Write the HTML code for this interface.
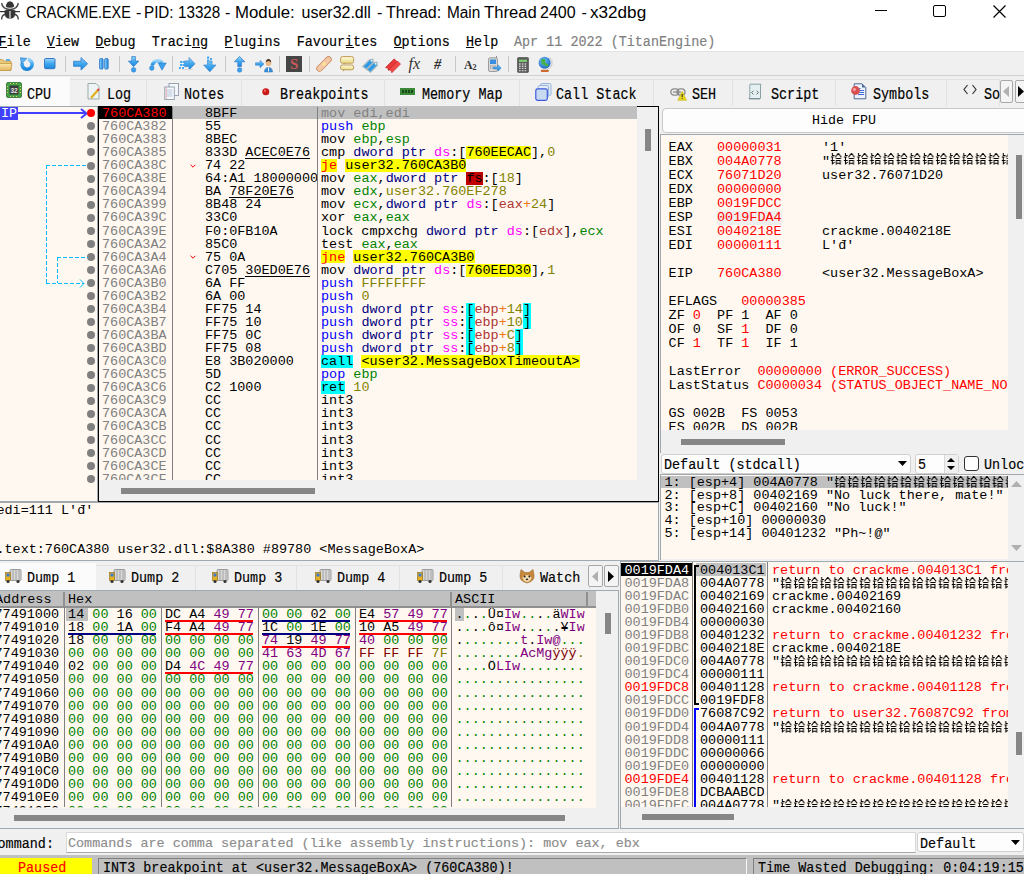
<!DOCTYPE html><html><head><meta charset="utf-8"><style>
html,body{margin:0;padding:0;width:1024px;height:874px;overflow:hidden;background:#f0f0f0;position:relative}
body div{position:absolute;box-sizing:border-box}
.t{white-space:pre;font-family:'Liberation Mono',monospace}
svg{position:absolute;overflow:visible}
</style></head><body>
<div style="left:0px;top:0px;width:1024px;height:51px;background:#ffffff;"></div>
<svg style="left:0;top:0" width="22" height="22" viewBox="0 0 22 22">
<path d="M1.6 3.2 Q2.5 9.5 9.95 9.5 Q17.4 9.5 18.3 3.2" stroke="#4a4a4a" stroke-width="1.5" fill="none"/>
<path d="M0 11.6 H19.9" stroke="#333" stroke-width="1.2"/>
<path d="M5 14.5 Q1.8 15 1.6 19.5 M14.9 14.5 Q18.1 15 18.3 19.5" stroke="#444" stroke-width="1.4" fill="none"/>
<path d="M9.95 1.2 Q13.2 1.4 14.2 6.2 Q13.5 7.8 9.95 7.8 Q6.4 7.8 5.7 6.2 Q6.7 1.4 9.95 1.2z" fill="#353535"/>
<path d="M4.6 10.2 Q9.95 9.2 15.3 10.2 Q16.2 18.8 9.95 18.8 Q3.7 18.8 4.6 10.2z" fill="#353535"/>
<rect x="9" y="11" width="1.9" height="7.6" fill="#a8a8a8"/>
</svg>
<div class="t" style="left:25.5px;top:3px;color:#000;font-size:16px;font-family:'Liberation Sans', sans-serif;line-height:19px;transform:scaleX(0.9);transform-origin:0 0">CRACKME.EXE</div>
<div class="t" style="left:136px;top:3px;color:#000;font-size:16px;font-family:'Liberation Sans', sans-serif;line-height:19px;transform:scaleX(1);transform-origin:0 0">-</div>
<div class="t" style="left:144px;top:3px;color:#000;font-size:16px;font-family:'Liberation Sans', sans-serif;line-height:19px;transform:scaleX(0.95);transform-origin:0 0">PID:</div>
<div class="t" style="left:177.5px;top:3px;color:#000;font-size:16px;font-family:'Liberation Sans', sans-serif;line-height:19px;transform:scaleX(0.95);transform-origin:0 0">13328</div>
<div class="t" style="left:225px;top:3px;color:#000;font-size:16px;font-family:'Liberation Sans', sans-serif;line-height:19px;transform:scaleX(1);transform-origin:0 0">-</div>
<div class="t" style="left:235px;top:3px;color:#000;font-size:16px;font-family:'Liberation Sans', sans-serif;line-height:19px;transform:scaleX(1.05);transform-origin:0 0">Module:</div>
<div class="t" style="left:301.5px;top:3px;color:#000;font-size:16px;font-family:'Liberation Sans', sans-serif;line-height:19px;transform:scaleX(1.0);transform-origin:0 0">user32.dll</div>
<div class="t" style="left:377px;top:3px;color:#000;font-size:16px;font-family:'Liberation Sans', sans-serif;line-height:19px;transform:scaleX(1);transform-origin:0 0">-</div>
<div class="t" style="left:386px;top:3px;color:#000;font-size:16px;font-family:'Liberation Sans', sans-serif;line-height:19px;transform:scaleX(1.0);transform-origin:0 0">Thread:</div>
<div class="t" style="left:447px;top:3px;color:#000;font-size:16px;font-family:'Liberation Sans', sans-serif;line-height:19px;transform:scaleX(0.96);transform-origin:0 0">Main</div>
<div class="t" style="left:483.5px;top:3px;color:#000;font-size:16px;font-family:'Liberation Sans', sans-serif;line-height:19px;transform:scaleX(1.04);transform-origin:0 0">Thread</div>
<div class="t" style="left:540px;top:3px;color:#000;font-size:16px;font-family:'Liberation Sans', sans-serif;line-height:19px;transform:scaleX(1.0);transform-origin:0 0">2400</div>
<div class="t" style="left:581.5px;top:3px;color:#000;font-size:16px;font-family:'Liberation Sans', sans-serif;line-height:19px;transform:scaleX(1);transform-origin:0 0">-</div>
<div class="t" style="left:590px;top:3px;color:#000;font-size:16px;font-family:'Liberation Sans', sans-serif;line-height:19px;transform:scaleX(1.07);transform-origin:0 0">x32dbg</div>
<div style="left:875px;top:10px;width:12px;height:1px;background:#000;"></div>
<div style="left:933px;top:5px;width:13px;height:12px;border:1.2px solid #000;border-radius:2px"></div>
<svg style="left:993px;top:5px" width="13" height="13"><path d="M0.5 0.5 L12.5 12.5 M12.5 0.5 L0.5 12.5" stroke="#000" stroke-width="1.2"/></svg>
<div class="t" style="left:-1.5px;top:34px;color:#000;font-size:13.43px;font-family:'Liberation Mono', monospace;line-height:15px;transform:scaleY(1.11);transform-origin:0 2px;-webkit-text-stroke:0.15px #000;">File</div>
<div style="left:-1.0px;top:47px;width:8px;height:1px;background:#000;"></div>
<div class="t" style="left:46.86px;top:34px;color:#000;font-size:13.43px;font-family:'Liberation Mono', monospace;line-height:15px;transform:scaleY(1.11);transform-origin:0 2px;-webkit-text-stroke:0.15px #000;">View</div>
<div style="left:47.36px;top:47px;width:8px;height:1px;background:#000;"></div>
<div class="t" style="left:95.22px;top:34px;color:#000;font-size:13.43px;font-family:'Liberation Mono', monospace;line-height:15px;transform:scaleY(1.11);transform-origin:0 2px;-webkit-text-stroke:0.15px #000;">Debug</div>
<div style="left:95.72px;top:47px;width:8px;height:1px;background:#000;"></div>
<div class="t" style="left:151.64px;top:34px;color:#000;font-size:13.43px;font-family:'Liberation Mono', monospace;line-height:15px;transform:scaleY(1.11);transform-origin:0 2px;-webkit-text-stroke:0.15px #000;">Tracing</div>
<div style="left:192.44px;top:47px;width:8px;height:1px;background:#000;"></div>
<div class="t" style="left:224.18px;top:34px;color:#000;font-size:13.43px;font-family:'Liberation Mono', monospace;line-height:15px;transform:scaleY(1.11);transform-origin:0 2px;-webkit-text-stroke:0.15px #000;">Plugins</div>
<div style="left:224.68px;top:47px;width:8px;height:1px;background:#000;"></div>
<div class="t" style="left:296.72px;top:34px;color:#000;font-size:13.43px;font-family:'Liberation Mono', monospace;line-height:15px;transform:scaleY(1.11);transform-origin:0 2px;-webkit-text-stroke:0.15px #000;">Favourites</div>
<div style="left:345.58px;top:47px;width:8px;height:1px;background:#000;"></div>
<div class="t" style="left:393.44px;top:34px;color:#000;font-size:13.43px;font-family:'Liberation Mono', monospace;line-height:15px;transform:scaleY(1.11);transform-origin:0 2px;-webkit-text-stroke:0.15px #000;">Options</div>
<div style="left:393.94px;top:47px;width:8px;height:1px;background:#000;"></div>
<div class="t" style="left:465.98px;top:34px;color:#000;font-size:13.43px;font-family:'Liberation Mono', monospace;line-height:15px;transform:scaleY(1.11);transform-origin:0 2px;-webkit-text-stroke:0.15px #000;">Help</div>
<div style="left:466.48px;top:47px;width:8px;height:1px;background:#000;"></div>
<div class="t" style="left:514px;top:34px;color:#808080;font-size:13.43px;font-family:'Liberation Mono', monospace;line-height:15px;transform:scaleY(1.11);transform-origin:0 2px;-webkit-text-stroke:0.15px #808080;">Apr 11 2022 (TitanEngine)</div>
<div style="left:0px;top:51px;width:1024px;height:1px;background:#e3e3e3;"></div>
<div style="left:0px;top:75px;width:1024px;height:1px;background:#d0d0d0;"></div>
<div style="left:65px;top:56px;width:1px;height:16px;background:#c8c8c8;"></div>
<div style="left:119px;top:56px;width:1px;height:16px;background:#c8c8c8;"></div>
<div style="left:172px;top:56px;width:1px;height:16px;background:#c8c8c8;"></div>
<div style="left:225px;top:56px;width:1px;height:16px;background:#c8c8c8;"></div>
<div style="left:279px;top:56px;width:1px;height:16px;background:#c8c8c8;"></div>
<div style="left:309px;top:56px;width:1px;height:16px;background:#c8c8c8;"></div>
<div style="left:455px;top:56px;width:1px;height:16px;background:#c8c8c8;"></div>
<div style="left:508px;top:56px;width:1px;height:16px;background:#c8c8c8;"></div>
<svg style="left:0;top:0" width="0" height="0"><defs><linearGradient id="gb" x1="0" y1="0" x2="0" y2="1"><stop offset="0" stop-color="#9ad6fa"/><stop offset="0.5" stop-color="#3fa6ee"/><stop offset="1" stop-color="#1d86dc"/></linearGradient><linearGradient id="gbh" x1="0" y1="0" x2="1" y2="0"><stop offset="0" stop-color="#8ccff8"/><stop offset="1" stop-color="#1d86dc"/></linearGradient><linearGradient id="gf" x1="0" y1="0" x2="0" y2="1"><stop offset="0" stop-color="#fbe7a8"/><stop offset="1" stop-color="#e2b864"/></linearGradient><linearGradient id="gc" x1="0" y1="0" x2="0" y2="1"><stop offset="0" stop-color="#fffbe0"/><stop offset="1" stop-color="#e8dc80"/></linearGradient><radialGradient id="gg" cx="0.4" cy="0.35" r="0.7"><stop offset="0" stop-color="#7cc8ff"/><stop offset="1" stop-color="#1060c0"/></radialGradient></defs></svg>
<svg style="left:-4px;top:57px" width="17" height="15" viewBox="0 0 17 15"><path d="M0.5 2.5 h6 l1.5 1.5 h7 v9.5 h-14.5z" fill="#e9c778" stroke="#c49a48" stroke-width="0.8"/><path d="M10 2 h4 v2 h-4z" fill="#5ab0e0"/><path d="M0.5 6.5 h15.5 l-1.5 7 h-14z" fill="url(#gf)" stroke="#c49a48" stroke-width="0.8"/></svg>
<svg style="left:19.5px;top:57px" width="15" height="15" viewBox="0 0 15 15"><path d="M7.8 2.3 A5 5 0 1 1 2.4 5.6" fill="none" stroke="url(#gb)" stroke-width="3.6"/><path d="M0.4 0.8 L6.8 1.4 L1.6 6.8z" fill="#5ab4f2" stroke="#2a80d0" stroke-width="0.7"/></svg>
<svg style="left:44px;top:58px" width="12" height="12" viewBox="0 0 12 12"><rect x="0.5" y="0.5" width="10.5" height="10.2" rx="1.2" fill="url(#gb)" stroke="#2a70c0" stroke-width="0.9"/></svg>
<svg style="left:73px;top:57px" width="16" height="14" viewBox="0 0 16 14"><path d="M0.6 4.3 h7.4 v-3.8 l6.6 6.3 l-6.6 6.3 v-3.8 h-7.4z" fill="url(#gb)" stroke="#2a78c8" stroke-width="0.8"/></svg>
<svg style="left:98.5px;top:57.8px" width="10" height="12" viewBox="0 0 10 12"><rect x="0.5" y="0.5" width="3.6" height="10.6" rx="1.2" fill="url(#gbh)" stroke="#2a78c8" stroke-width="0.8"/><rect x="5.6" y="0.5" width="3.6" height="10.6" rx="1.2" fill="url(#gbh)" stroke="#2a78c8" stroke-width="0.8"/></svg>
<svg style="left:127.5px;top:55.5px" width="12" height="17" viewBox="0 0 12 17"><path d="M3.8 0.5 h3.6 v4.6 h3.4 l-5.2 5.6 l-5.2 -5.6 h3.4z" fill="url(#gb)" stroke="#2a78c8" stroke-width="0.7"/><circle cx="5.6" cy="13.9" r="2.3" fill="#3aa0ec" stroke="#2a78c8" stroke-width="0.5"/></svg>
<svg style="left:148.5px;top:56.5px" width="18" height="15" viewBox="0 0 18 15"><path d="M3.2 8.5 A6 6 0 0 1 13.4 5.6" fill="none" stroke="url(#gb)" stroke-width="3.4"/><path d="M9.2 6 h8 l-4.2 7.2z" fill="#3aa0ec" stroke="#2a78c8" stroke-width="0.6"/><circle cx="2.8" cy="11.1" r="2.3" fill="#3aa0ec" stroke="#2a78c8" stroke-width="0.5"/></svg>
<svg style="left:178.5px;top:56.5px" width="17" height="15" viewBox="0 0 17 15"><path d="M5.5 4 h4.5 v-3.5 l6 6.3 l-6 6.3 v-3.5 h-4.5z" fill="url(#gb)" stroke="#2a78c8" stroke-width="0.6"/><path d="M1 4h2v2h-2zM3.5 4h2v2h-2zM1 7h2v2h-2zM3.5 7h2v2h-2zM0 10h2v2h-2zM3 10h2v2h-2z" fill="#4aaaf0"/><path d="M4 12.5 h10" stroke="#d8d8d8" stroke-width="1"/></svg>
<svg style="left:202.5px;top:55.5px" width="14" height="17" viewBox="0 0 14 17"><path d="M4.5 5 h4.5 v4 h4 l-6.2 6.8 l-6.2 -6.8 h4z" fill="url(#gb)" stroke="#2a78c8" stroke-width="0.6"/><path d="M4 0.5h2.2v2.2h-2.2zM7 2h2v2h-2zM4 3.5h2v2h-2zM6.5 5h2v2h-2zM4 7h2v2h-2zM6.5 8h2v2h-2z" fill="#4aaaf0"/></svg>
<svg style="left:233.5px;top:55.5px" width="12" height="17" viewBox="0 0 12 17"><path d="M5.6 0.4 l5.2 5.4 h-3.4 v4.8 h-3.6 v-4.8 h-3.4z" fill="url(#gb)" stroke="#2a78c8" stroke-width="0.7"/><circle cx="5.6" cy="14" r="2.3" fill="#3aa0ec" stroke="#2a78c8" stroke-width="0.5"/></svg>
<svg style="left:255px;top:56.5px" width="18" height="16" viewBox="0 0 18 16"><path d="M0.5 5.8 h4.5 v-2.5 l4 3.7 l-4 3.7 v-2.5 h-4.5z" fill="url(#gb)" stroke="#2a78c8" stroke-width="0.5"/><path d="M9.5 15 q0 -4.5 4 -4.5 q4 0 4 4.5z" fill="#3a90d8" stroke="#2a70b0" stroke-width="0.5"/><circle cx="13.5" cy="6.2" r="2.8" fill="#e8b888"/><path d="M10.8 5.5 q0 -3.5 2.7 -3.5 q2.7 0 2.7 3.5 q-1.2 -1.5 -2.7 -1.5 q-1.5 0 -2.7 1.5z" fill="#4a3020"/><path d="M13.5 10.5 v4" stroke="#f0f0f0" stroke-width="1"/></svg>
<svg style="left:286px;top:56px" width="16" height="16" viewBox="0 0 16 16"><rect x="0" y="0" width="16" height="16" fill="#454545"/><text x="8.2" y="13.2" font-family="Liberation Serif" font-weight="bold" font-size="15" fill="#c85858" text-anchor="middle">S</text></svg>
<svg style="left:316px;top:56px" width="16" height="16" viewBox="0 0 16 16"><path d="M3.5 12.5 L12.5 3.5" stroke="#c88a60" stroke-width="6.4" stroke-linecap="round"/><path d="M3.5 12.5 L12.5 3.5" stroke="#f4c8a4" stroke-width="4.8" stroke-linecap="round"/><rect x="6.3" y="6.3" width="3.4" height="3.4" fill="#fae0a0" transform="rotate(45 8 8)"/></svg>
<svg style="left:339.8px;top:55.8px" width="15" height="16" viewBox="0 0 15 16"><rect x="0.6" y="0.6" width="13" height="6.6" rx="1.8" fill="url(#gc)" stroke="#c09a58" stroke-width="1"/><path d="M3.5 7 l0.5 1.6 l1.6 -1.6" fill="#c09a58"/><rect x="0.6" y="9" width="13" height="4.8" rx="1.8" fill="url(#gc)" stroke="#c09a58" stroke-width="1"/><path d="M3 13.5 l0 2 l2 -2" fill="#c09a58"/></svg>
<svg style="left:361.5px;top:56.5px" width="16" height="16" viewBox="0 0 16 16"><path d="M0.8 9.5 L7.5 2.8 L10.8 2.2 L11.2 5.5 L4.5 12.2z" fill="#2a9ae8" stroke="#a8b8c0" stroke-width="1.3"/><path d="M4.8 12.5 L11.5 5.8 L14.8 5.2 L15.2 8.5 L8.5 15.2z" fill="#2a9ae8" stroke="#a8b8c0" stroke-width="1.3"/><circle cx="9.6" cy="3.8" r="0.9" fill="#fff"/><circle cx="13.6" cy="6.8" r="0.9" fill="#fff"/></svg>
<svg style="left:385px;top:56.5px" width="16" height="16" viewBox="0 0 16 16"><path d="M0.5 10.5 L9.2 1.8 L12.2 4.8 L3.5 13.5 L2.8 11.2z" fill="#e83838" stroke="#c02020" stroke-width="0.6"/><path d="M3.8 12.8 L12.5 4.1 L15.5 7.1 L6.8 15.8 L6.1 13.5z" fill="#f04848" stroke="#c02020" stroke-width="0.6"/></svg>
<svg style="left:407.5px;top:56.5px" width="17" height="16" viewBox="0 0 17 16"><text x="0.5" y="12" font-family="Liberation Serif" font-style="italic" font-size="16" fill="#333">fx</text></svg>
<svg style="left:434px;top:57px" width="14" height="16" viewBox="0 0 14 16"><text x="0" y="11.5" font-family="Liberation Serif" font-weight="bold" font-style="italic" font-size="14.5" fill="#333">#</text></svg>
<svg style="left:464px;top:58px" width="14" height="14" viewBox="0 0 14 14"><text x="0" y="11" font-family="Liberation Serif" font-weight="bold" font-size="12" fill="#333">A</text><text x="8.4" y="11.5" font-family="Liberation Serif" font-weight="bold" font-size="8" fill="#333">2</text></svg>
<svg style="left:487.5px;top:56px" width="14" height="16" viewBox="0 0 14 16"><path d="M8.5 0 v2" stroke="#777" stroke-width="0.8"/><rect x="0.5" y="1.8" width="9" height="13.7" rx="1.5" fill="#d8d8d8" stroke="#8a8a8a" stroke-width="0.8"/><rect x="2" y="3.5" width="6" height="4.5" fill="#3a8ee0"/><path d="M2 10h1.2M4.2 10h1.2M6.4 10h1.2M2 12h1.2M4.2 12h1.2" stroke="#888" stroke-width="1"/><path d="M5.5 11 h4.5 v-2.2 l3.2 3.2 l-3.2 3.2 v-2.2 h-4.5z" fill="url(#gb)" stroke="#2a78c8" stroke-width="0.5"/></svg>
<svg style="left:516.5px;top:56.5px" width="12" height="16" viewBox="0 0 12 16"><rect x="0.5" y="0.5" width="11" height="15" rx="1" fill="#5a5a5a" stroke="#444" stroke-width="0.6"/><rect x="2" y="2.6" width="8" height="2.4" fill="#7cc870"/><path d="M2 7h1.6M4.8 7h1.6M7.6 7h1.6M2 9.2h1.6M4.8 9.2h1.6M7.6 9.2h1.6M2 11.4h1.6M4.8 11.4h1.6M7.6 11.4h1.6M2 13.6h1.6M4.8 13.6h1.6M7.6 13.6h1.6" stroke="#d0d0d0" stroke-width="1.4"/></svg>
<svg style="left:538px;top:56px" width="14" height="16" viewBox="0 0 14 16"><path d="M11.5 1.5 A6.8 6.8 0 0 1 9 13.5" fill="none" stroke="#b8b8b8" stroke-width="0.8"/><circle cx="6.6" cy="6.8" r="6" fill="url(#gg)"/><path d="M3.2 3.5 q2.5 -1.8 4.5 0.4 q-1.5 2 0.8 3.6 q1.8 0.3 2.2 2 q-2 2 -3.6 0.2 q-1.4 -1.8 -3.2 -1 q-1 -2.6 -0.7 -5.2z" fill="#48b048"/><rect x="2.8" y="13.8" width="8" height="2.2" rx="1" fill="#c86a30"/></svg>
<div style="left:0px;top:76px;width:1024px;height:30px;background:#f0f0f0;"></div>
<div style="left:0px;top:77px;width:70px;height:29px;background:#fbfbfb;"></div>
<div class="t" style="left:27px;top:85.6px;color:#000;font-size:13.43px;font-family:'Liberation Mono', monospace;line-height:15px;transform:scaleY(1.17);transform-origin:0 2px;-webkit-text-stroke:0.15px #000;">CPU</div>
<div style="left:70px;top:79px;width:77px;height:27px;background:#f0f0f0;border-top:1px solid #e2e2e2;border-right:1px solid #e2e2e2"></div>
<div class="t" style="left:107px;top:85.6px;color:#000;font-size:13.43px;font-family:'Liberation Mono', monospace;line-height:15px;transform:scaleY(1.17);transform-origin:0 2px;-webkit-text-stroke:0.15px #000;">Log</div>
<div style="left:147px;top:79px;width:95px;height:27px;background:#f0f0f0;border-top:1px solid #e2e2e2;border-right:1px solid #e2e2e2"></div>
<div class="t" style="left:184px;top:85.6px;color:#000;font-size:13.43px;font-family:'Liberation Mono', monospace;line-height:15px;transform:scaleY(1.17);transform-origin:0 2px;-webkit-text-stroke:0.15px #000;">Notes</div>
<div style="left:242px;top:79px;width:143px;height:27px;background:#f0f0f0;border-top:1px solid #e2e2e2;border-right:1px solid #e2e2e2"></div>
<div class="t" style="left:280px;top:85.6px;color:#000;font-size:13.43px;font-family:'Liberation Mono', monospace;line-height:15px;transform:scaleY(1.17);transform-origin:0 2px;-webkit-text-stroke:0.15px #000;">Breakpoints</div>
<div style="left:385px;top:79px;width:135px;height:27px;background:#f0f0f0;border-top:1px solid #e2e2e2;border-right:1px solid #e2e2e2"></div>
<div class="t" style="left:422px;top:85.6px;color:#000;font-size:13.43px;font-family:'Liberation Mono', monospace;line-height:15px;transform:scaleY(1.17);transform-origin:0 2px;-webkit-text-stroke:0.15px #000;">Memory Map</div>
<div style="left:520px;top:79px;width:134px;height:27px;background:#f0f0f0;border-top:1px solid #e2e2e2;border-right:1px solid #e2e2e2"></div>
<div class="t" style="left:556px;top:85.6px;color:#000;font-size:13.43px;font-family:'Liberation Mono', monospace;line-height:15px;transform:scaleY(1.17);transform-origin:0 2px;-webkit-text-stroke:0.15px #000;">Call Stack</div>
<div style="left:654px;top:79px;width:79px;height:27px;background:#f0f0f0;border-top:1px solid #e2e2e2;border-right:1px solid #e2e2e2"></div>
<div class="t" style="left:692px;top:85.6px;color:#000;font-size:13.43px;font-family:'Liberation Mono', monospace;line-height:15px;transform:scaleY(1.17);transform-origin:0 2px;-webkit-text-stroke:0.15px #000;">SEH</div>
<div style="left:733px;top:79px;width:103px;height:27px;background:#f0f0f0;border-top:1px solid #e2e2e2;border-right:1px solid #e2e2e2"></div>
<div class="t" style="left:771px;top:85.6px;color:#000;font-size:13.43px;font-family:'Liberation Mono', monospace;line-height:15px;transform:scaleY(1.17);transform-origin:0 2px;-webkit-text-stroke:0.15px #000;">Script</div>
<div style="left:836px;top:79px;width:111px;height:27px;background:#f0f0f0;border-top:1px solid #e2e2e2;border-right:1px solid #e2e2e2"></div>
<div class="t" style="left:873px;top:85.6px;color:#000;font-size:13.43px;font-family:'Liberation Mono', monospace;line-height:15px;transform:scaleY(1.17);transform-origin:0 2px;-webkit-text-stroke:0.15px #000;">Symbols</div>
<div style="left:947px;top:79px;width:53px;height:27px;background:#f0f0f0;border-top:1px solid #e2e2e2;border-right:1px solid #e2e2e2"></div>
<div class="t" style="left:984px;top:85.6px;color:#000;font-size:13.43px;font-family:'Liberation Mono', monospace;line-height:15px;transform:scaleY(1.17);transform-origin:0 2px;-webkit-text-stroke:0.15px #000;">So</div>
<svg style="left:5.5px;top:82px" width="16" height="16" viewBox="0 0 16 16"><rect x="0.5" y="0.5" width="15" height="15" rx="1.5" fill="#43a047" stroke="#2e6e30" stroke-width="0.8"/><rect x="3.5" y="3.5" width="9" height="9" fill="#3a3a3a"/><text x="8" y="11" font-family="Liberation Sans" font-weight="bold" font-size="6.5" fill="#e8e8e8" text-anchor="middle">32</text><path d="M1.5 4v1M1.5 7v1M1.5 10v1M14.5 4v1M14.5 7v1M14.5 10v1M4 1.5h1M7 1.5h1M10 1.5h1M4 14.5h1M7 14.5h1M10 14.5h1" stroke="#e8d060" stroke-width="1"/></svg>
<svg style="left:87px;top:83px" width="14" height="17" viewBox="0 0 14 17"><path d="M1 0.5 h8 l3 3 v12.5 h-11z" fill="#eef4f6" stroke="#9aa"/><path d="M4 15 L11 7" stroke="#e0b020" stroke-width="2.2"/><path d="M10.5 7.5 l1.5 -1.5" stroke="#e04040" stroke-width="2.2"/></svg>
<svg style="left:163.5px;top:82.5px" width="15" height="17" viewBox="0 0 15 17"><rect x="5" y="0.5" width="9.5" height="12" fill="#f4f6f8" stroke="#8a9aaa" stroke-width="0.9"/><rect x="0.8" y="4" width="9.5" height="12.5" fill="#f8fafc" stroke="#8a9aaa" stroke-width="0.9"/><path d="M2.5 7h6M2.5 9h6M2.5 11h6M2.5 13h6" stroke="#9ab0d0" stroke-width="0.7"/><path d="M2.2 4.5 V16" stroke="#e08080" stroke-width="0.6"/></svg>
<svg style="left:261.8px;top:88px" width="8" height="8" viewBox="0 0 8 8"><circle cx="3.8" cy="3.8" r="3.5" fill="#c81818"/><circle cx="3" cy="2.8" r="1.2" fill="#f06060"/></svg>
<svg style="left:400px;top:88px" width="15" height="8" viewBox="0 0 15 8"><rect x="0" y="0" width="15" height="7" fill="#3a8a3a"/><path d="M2 2h2v3h-2zM5 2h2v3h-2zM8 2h2v3h-2zM11 2h2v3h-2z" fill="#1a4a1a"/></svg>
<svg style="left:534.5px;top:82.5px" width="17" height="18" viewBox="0 0 17 18"><rect x="5.5" y="0.5" width="10.5" height="12" rx="1.6" fill="#dfe8f4" stroke="#8fb0d8" stroke-width="0.9"/><rect x="3" y="2.5" width="10.5" height="12" rx="1.6" fill="#e4ecf6" stroke="#8fb0d8" stroke-width="0.9"/><rect x="0.8" y="5.8" width="11.5" height="11.5" rx="1.8" fill="#c8daf0" stroke="#3a58e0" stroke-width="1.2"/></svg>
<svg style="left:669.5px;top:87.5px" width="17" height="13" viewBox="0 0 17 13"><rect x="0.8" y="0.8" width="8" height="6.4" rx="3.2" fill="none" stroke="#8a8a8a" stroke-width="1.3"/><rect x="7" y="0.8" width="8" height="6.4" rx="3.2" fill="none" stroke="#8a8a8a" stroke-width="1.3"/><path d="M3 4 H11" stroke="#8a8a8a" stroke-width="1.3"/><path d="M12.2 3.2 L16.6 12.3 H7.8z" fill="#e8d820" stroke="#c0a800" stroke-width="0.5"/><path d="M12.2 6 V9.2 M12.2 10.2 V11" stroke="#111" stroke-width="0.9"/></svg>
<svg style="left:748px;top:82.5px" width="15" height="17" viewBox="0 0 15 17"><path d="M2 1.2 H13 L12.5 2.8 V15.5 H1 L1.8 14 V2.5z" fill="#e4f0f2" stroke="#8aa0a4" stroke-width="1"/><path d="M1 15.8 H12" stroke="#7a9094" stroke-width="1.2"/><path d="M5.4 7.8 L3.6 9.6 L5.4 11.4 M8.6 7.8 L10.4 9.6 L8.6 11.4" stroke="#555" fill="none" stroke-width="0.9"/></svg>
<svg style="left:853px;top:82.5px" width="14" height="17" viewBox="0 0 14 17"><path d="M1.2 0.8 H9 L12.8 4.6 V15.8 H1.2z" fill="#eef2fa" stroke="#3a5a88" stroke-width="0.9"/><path d="M9 0.8 V4.6 H12.8" fill="#4a6a98"/><path d="M5 5.5h2.5M5 7.5h6M5 9.5h6M5 11.5h6" stroke="#2a5ad0" stroke-width="0.9"/></svg>
<svg style="left:850px;top:84.5px" width="11" height="11" viewBox="0 0 11 11"><circle cx="5.5" cy="5.5" r="4.4" fill="#d85050"/><circle cx="4.4" cy="4.4" r="1.6" fill="#f4a0a0"/></svg>
<svg style="left:963px;top:84px" width="14" height="12" viewBox="0 0 14 12"><path d="M4.5 1 L1 5.5 L4.5 10 M9.5 1 L13 5.5 L9.5 10" stroke="#333" fill="none" stroke-width="1.2"/></svg>
<div style="left:1000px;top:80px;width:13px;height:23px;background:#f4f4f4;border:1px solid #a8a8a8;border-radius:2px"></div>
<svg style="left:1003px;top:86px" width="8" height="11"><path d="M6 0 L0 5.5 L6 11z" fill="#b0b0b0"/></svg>
<div style="left:1015px;top:80px;width:13px;height:23px;background:#f4f4f4;border:1px solid #a8a8a8;border-radius:2px"></div>
<svg style="left:1018px;top:86px" width="8" height="11"><path d="M0 0 L6 5.5 L0 11z" fill="#000"/></svg>
<svg style="left:0;top:0" width="0" height="0"><defs><pattern id="cjk" x="0" y="0" width="13.15" height="14" patternUnits="userSpaceOnUse"><path d="M2.3 0 V2.5 H4.5 M0.8 4 H3.6 M0.8 7.5 H4.5 M2.3 4 V11.5 M2.3 10.8 L4.5 9.2 M8.3 0.3 L5.2 4.4 M8.3 0.3 L11.4 4.4 M5.8 5.45 H10.9 M6.3 7.5 H10.3 M6.3 7 V11.8 M10.3 7 V11.8 M6.3 10.15 H10.3" stroke="#000" stroke-width="1" fill="none"/></pattern></defs></svg>
<div style="left:0px;top:106px;width:98px;height:396px;background:#fff8f0;border-top:1px solid #a0a8b0;border-bottom:1px solid #a0a8b0;border-right:1px solid #a0a8b0"></div>
<div style="left:98px;top:106px;width:561px;height:396px;background:#f0f0f0;border:1px solid #000"></div>
<div style="left:99px;top:107px;width:538px;height:373px;background:#fff8f0;"></div>
<div style="left:0px;top:107px;width:18px;height:12.5px;background:#4040ff;"></div>
<div class="t" style="left:1px;top:107px;color:#ffffff;font-size:13.46px;font-family:'Liberation Mono', monospace;line-height:13px;">IP</div>
<div style="left:17px;top:112px;width:69px;height:2px;background:#4040ff;"></div>
<svg style="left:80px;top:108px" width="8" height="11"><path d="M1 1 L6.5 5.5 L1 10" stroke="#4040ff" stroke-width="2" fill="none"/></svg>
<div style="left:87.3px;top:109.3px;width:8px;height:8px;border-radius:4px;background:#ff0000"></div>
<div style="left:87.3px;top:122.36px;width:8px;height:8px;border-radius:4px;background:#808080"></div>
<div style="left:87.3px;top:135.42px;width:8px;height:8px;border-radius:4px;background:#808080"></div>
<div style="left:87.3px;top:148.48px;width:8px;height:8px;border-radius:4px;background:#808080"></div>
<div style="left:87.3px;top:161.54px;width:8px;height:8px;border-radius:4px;background:#808080"></div>
<div style="left:87.3px;top:174.6px;width:8px;height:8px;border-radius:4px;background:#808080"></div>
<div style="left:87.3px;top:187.66px;width:8px;height:8px;border-radius:4px;background:#808080"></div>
<div style="left:87.3px;top:200.72px;width:8px;height:8px;border-radius:4px;background:#808080"></div>
<div style="left:87.3px;top:213.78px;width:8px;height:8px;border-radius:4px;background:#808080"></div>
<div style="left:87.3px;top:226.84px;width:8px;height:8px;border-radius:4px;background:#808080"></div>
<div style="left:87.3px;top:239.9px;width:8px;height:8px;border-radius:4px;background:#808080"></div>
<div style="left:87.3px;top:252.95999999999998px;width:8px;height:8px;border-radius:4px;background:#808080"></div>
<div style="left:87.3px;top:266.02px;width:8px;height:8px;border-radius:4px;background:#808080"></div>
<div style="left:87.3px;top:279.08px;width:8px;height:8px;border-radius:4px;background:#808080"></div>
<div style="left:87.3px;top:292.14px;width:8px;height:8px;border-radius:4px;background:#808080"></div>
<div style="left:87.3px;top:305.2px;width:8px;height:8px;border-radius:4px;background:#808080"></div>
<div style="left:87.3px;top:318.26px;width:8px;height:8px;border-radius:4px;background:#808080"></div>
<div style="left:87.3px;top:331.32px;width:8px;height:8px;border-radius:4px;background:#808080"></div>
<div style="left:87.3px;top:344.38px;width:8px;height:8px;border-radius:4px;background:#808080"></div>
<div style="left:87.3px;top:357.44px;width:8px;height:8px;border-radius:4px;background:#808080"></div>
<div style="left:87.3px;top:370.5px;width:8px;height:8px;border-radius:4px;background:#808080"></div>
<div style="left:87.3px;top:383.56px;width:8px;height:8px;border-radius:4px;background:#808080"></div>
<div style="left:87.3px;top:396.62px;width:8px;height:8px;border-radius:4px;background:#808080"></div>
<div style="left:87.3px;top:409.68px;width:8px;height:8px;border-radius:4px;background:#808080"></div>
<div style="left:87.3px;top:422.74px;width:8px;height:8px;border-radius:4px;background:#808080"></div>
<div style="left:87.3px;top:435.8px;width:8px;height:8px;border-radius:4px;background:#808080"></div>
<div style="left:87.3px;top:448.86px;width:8px;height:8px;border-radius:4px;background:#808080"></div>
<div style="left:87.3px;top:461.92px;width:8px;height:8px;border-radius:4px;background:#808080"></div>
<div style="left:87.3px;top:474.98px;width:8px;height:8px;border-radius:4px;background:#808080"></div>
<div style="left:46px;top:165px;width:42px;height:1px;background:repeating-linear-gradient(90deg,#00bbff 0 4px,transparent 4px 6px)"></div>
<div style="left:46px;top:165px;width:1px;height:118px;background:repeating-linear-gradient(180deg,#00bbff 0 4px,transparent 4px 6px)"></div>
<div style="left:46px;top:283px;width:38px;height:1px;background:repeating-linear-gradient(90deg,#00bbff 0 4px,transparent 4px 6px)"></div>
<div style="left:57px;top:257px;width:31px;height:1px;background:repeating-linear-gradient(90deg,#00bbff 0 4px,transparent 4px 6px)"></div>
<div style="left:57px;top:257px;width:1px;height:26px;background:repeating-linear-gradient(180deg,#00bbff 0 4px,transparent 4px 6px)"></div>
<svg style="left:79px;top:279px" width="8" height="9"><path d="M1 0.5 L5 4.5 L1 8.5" stroke="#00bbff" stroke-width="1" fill="none"/></svg>
<div style="left:99px;top:106.3px;width:73px;height:13px;background:#000;"></div>
<div style="left:172px;top:106.3px;width:465px;height:13px;background:#c0c0c0;"></div>
<div class="t" style="left:102px;top:107.0px;color:#ff0000;font-size:13.46px;font-family:'Liberation Mono', monospace;line-height:13px;clip-path:inset(0 0 0px 0)">760CA380</div>
<div class="t" style="left:205px;top:107.0px;color:#000;font-size:13.46px;font-family:'Liberation Mono', monospace;line-height:13px;clip-path:inset(0 0 0px 0)">8BFF</div>
<div class="t" style="left:321px;top:107.0px;color:#000;font-size:13.46px;font-family:'Liberation Mono', monospace;line-height:13px;clip-path:inset(0 0 0px 0)"><span style="color:#808080">mov edi,edi</span></div>
<div class="t" style="left:102px;top:120.06px;color:#808080;font-size:13.46px;font-family:'Liberation Mono', monospace;line-height:13px;clip-path:inset(0 0 0px 0)">760CA382</div>
<div class="t" style="left:205px;top:120.06px;color:#000;font-size:13.46px;font-family:'Liberation Mono', monospace;line-height:13px;clip-path:inset(0 0 0px 0)">55</div>
<div class="t" style="left:321px;top:120.06px;color:#000;font-size:13.46px;font-family:'Liberation Mono', monospace;line-height:13px;clip-path:inset(0 0 0px 0)"><span style="color:#0000ff">push</span> <span style="color:#008300">ebp</span></div>
<div class="t" style="left:102px;top:133.12px;color:#808080;font-size:13.46px;font-family:'Liberation Mono', monospace;line-height:13px;clip-path:inset(0 0 0px 0)">760CA383</div>
<div class="t" style="left:205px;top:133.12px;color:#000;font-size:13.46px;font-family:'Liberation Mono', monospace;line-height:13px;clip-path:inset(0 0 0px 0)">8BEC</div>
<div class="t" style="left:321px;top:133.12px;color:#000;font-size:13.46px;font-family:'Liberation Mono', monospace;line-height:13px;clip-path:inset(0 0 0px 0)"><span style="color:#000">mov</span> <span style="color:#008300">ebp</span><span style="color:#000">,</span><span style="color:#008300">esp</span></div>
<div style="left:466.44px;top:145.6px;width:64.64px;height:13px;background:#ffff00;"></div>
<div class="t" style="left:102px;top:146.18px;color:#808080;font-size:13.46px;font-family:'Liberation Mono', monospace;line-height:13px;clip-path:inset(0 0 0px 0)">760CA385</div>
<div class="t" style="left:205px;top:146.18px;color:#000;font-size:13.46px;font-family:'Liberation Mono', monospace;line-height:13px;clip-path:inset(0 0 0px 0)">833D ACEC0E76</div>
<div class="t" style="left:321px;top:146.18px;color:#000;font-size:13.46px;font-family:'Liberation Mono', monospace;line-height:13px;clip-path:inset(0 0 0px 0)"><span style="color:#000">cmp</span> <span style="color:#000080">dword ptr</span> <span style="color:#ff00ff">ds</span><span style="color:#000">:</span><span style="color:#000">[</span><span style="color:#000">760EECAC</span><span style="color:#000">]</span><span style="color:#000">,</span><span style="color:#828200">0</span></div>
<div style="left:321.0px;top:158.7px;width:16.16px;height:13px;background:#ffff00;"></div>
<div style="left:345.24px;top:158.7px;width:121.2px;height:13px;background:#ffff00;"></div>
<div class="t" style="left:102px;top:159.24px;color:#808080;font-size:13.46px;font-family:'Liberation Mono', monospace;line-height:13px;clip-path:inset(0 0 0px 0)">760CA38C</div>
<div class="t" style="left:205px;top:159.24px;color:#000;font-size:13.46px;font-family:'Liberation Mono', monospace;line-height:13px;clip-path:inset(0 0 0px 0)">74 22</div>
<div class="t" style="left:321px;top:159.24px;color:#000;font-size:13.46px;font-family:'Liberation Mono', monospace;line-height:13px;clip-path:inset(0 0 0px 0)"><span style="color:#ff0000">je</span> <span style="color:#000">user32.760CA3B0</span></div>
<div style="left:466.44px;top:171.8px;width:16.16px;height:13px;background:#c00000;"></div>
<div class="t" style="left:102px;top:172.3px;color:#808080;font-size:13.46px;font-family:'Liberation Mono', monospace;line-height:13px;clip-path:inset(0 0 0px 0)">760CA38E</div>
<div class="t" style="left:205px;top:172.3px;color:#000;font-size:13.46px;font-family:'Liberation Mono', monospace;line-height:13px;clip-path:inset(0 0 0px 0)">64:A1 18000000</div>
<div class="t" style="left:321px;top:172.3px;color:#000;font-size:13.46px;font-family:'Liberation Mono', monospace;line-height:13px;clip-path:inset(0 0 0px 0)"><span style="color:#000">mov</span> <span style="color:#008300">eax</span><span style="color:#000">,</span><span style="color:#000080">dword ptr</span> <span style="color:#000">fs</span><span style="color:#000">:</span><span style="color:#000">[</span><span style="color:#828200">18</span><span style="color:#000">]</span></div>
<div class="t" style="left:102px;top:185.36px;color:#808080;font-size:13.46px;font-family:'Liberation Mono', monospace;line-height:13px;clip-path:inset(0 0 0px 0)">760CA394</div>
<div class="t" style="left:205px;top:185.36px;color:#000;font-size:13.46px;font-family:'Liberation Mono', monospace;line-height:13px;clip-path:inset(0 0 0px 0)">BA 78F20E76</div>
<div class="t" style="left:321px;top:185.36px;color:#000;font-size:13.46px;font-family:'Liberation Mono', monospace;line-height:13px;clip-path:inset(0 0 0px 0)"><span style="color:#000">mov</span> <span style="color:#008300">edx</span><span style="color:#000">,</span><span style="color:#828200">user32.760EF278</span></div>
<div class="t" style="left:102px;top:198.42px;color:#808080;font-size:13.46px;font-family:'Liberation Mono', monospace;line-height:13px;clip-path:inset(0 0 0px 0)">760CA399</div>
<div class="t" style="left:205px;top:198.42px;color:#000;font-size:13.46px;font-family:'Liberation Mono', monospace;line-height:13px;clip-path:inset(0 0 0px 0)">8B48 24</div>
<div class="t" style="left:321px;top:198.42px;color:#000;font-size:13.46px;font-family:'Liberation Mono', monospace;line-height:13px;clip-path:inset(0 0 0px 0)"><span style="color:#000">mov</span> <span style="color:#008300">ecx</span><span style="color:#000">,</span><span style="color:#000080">dword ptr</span> <span style="color:#ff00ff">ds</span><span style="color:#000">:</span><span style="color:#000">[</span><span style="color:#b03434">eax</span><span style="color:#f27711">+</span><span style="color:#828200">24</span><span style="color:#000">]</span></div>
<div class="t" style="left:102px;top:211.48px;color:#808080;font-size:13.46px;font-family:'Liberation Mono', monospace;line-height:13px;clip-path:inset(0 0 0px 0)">760CA39C</div>
<div class="t" style="left:205px;top:211.48px;color:#000;font-size:13.46px;font-family:'Liberation Mono', monospace;line-height:13px;clip-path:inset(0 0 0px 0)">33C0</div>
<div class="t" style="left:321px;top:211.48px;color:#000;font-size:13.46px;font-family:'Liberation Mono', monospace;line-height:13px;clip-path:inset(0 0 0px 0)"><span style="color:#000">xor</span> <span style="color:#008300">eax</span><span style="color:#000">,</span><span style="color:#008300">eax</span></div>
<div class="t" style="left:102px;top:224.54px;color:#808080;font-size:13.46px;font-family:'Liberation Mono', monospace;line-height:13px;clip-path:inset(0 0 0px 0)">760CA39E</div>
<div class="t" style="left:205px;top:224.54px;color:#000;font-size:13.46px;font-family:'Liberation Mono', monospace;line-height:13px;clip-path:inset(0 0 0px 0)">F0:0FB10A</div>
<div class="t" style="left:321px;top:224.54px;color:#000;font-size:13.46px;font-family:'Liberation Mono', monospace;line-height:13px;clip-path:inset(0 0 0px 0)"><span style="color:#000">lock cmpxchg</span> <span style="color:#000080">dword ptr</span> <span style="color:#ff00ff">ds</span><span style="color:#000">:</span><span style="color:#000">[</span><span style="color:#b03434">edx</span><span style="color:#000">]</span><span style="color:#000">,</span><span style="color:#008300">ecx</span></div>
<div class="t" style="left:102px;top:237.6px;color:#808080;font-size:13.46px;font-family:'Liberation Mono', monospace;line-height:13px;clip-path:inset(0 0 0px 0)">760CA3A2</div>
<div class="t" style="left:205px;top:237.6px;color:#000;font-size:13.46px;font-family:'Liberation Mono', monospace;line-height:13px;clip-path:inset(0 0 0px 0)">85C0</div>
<div class="t" style="left:321px;top:237.6px;color:#000;font-size:13.46px;font-family:'Liberation Mono', monospace;line-height:13px;clip-path:inset(0 0 0px 0)"><span style="color:#000">test</span> <span style="color:#008300">eax</span><span style="color:#000">,</span><span style="color:#008300">eax</span></div>
<div style="left:321.0px;top:250.4px;width:24.24px;height:13px;background:#ffff00;"></div>
<div style="left:353.32px;top:250.4px;width:121.2px;height:13px;background:#ffff00;"></div>
<div class="t" style="left:102px;top:250.66px;color:#808080;font-size:13.46px;font-family:'Liberation Mono', monospace;line-height:13px;clip-path:inset(0 0 0px 0)">760CA3A4</div>
<div class="t" style="left:205px;top:250.66px;color:#000;font-size:13.46px;font-family:'Liberation Mono', monospace;line-height:13px;clip-path:inset(0 0 0px 0)">75 0A</div>
<div class="t" style="left:321px;top:250.66px;color:#000;font-size:13.46px;font-family:'Liberation Mono', monospace;line-height:13px;clip-path:inset(0 0 0px 0)"><span style="color:#ff0000">jne</span> <span style="color:#000">user32.760CA3B0</span></div>
<div style="left:466.44px;top:263.5px;width:64.64px;height:13px;background:#ffff00;"></div>
<div class="t" style="left:102px;top:263.72px;color:#808080;font-size:13.46px;font-family:'Liberation Mono', monospace;line-height:13px;clip-path:inset(0 0 0px 0)">760CA3A6</div>
<div class="t" style="left:205px;top:263.72px;color:#000;font-size:13.46px;font-family:'Liberation Mono', monospace;line-height:13px;clip-path:inset(0 0 0px 0)">C705 30ED0E76</div>
<div class="t" style="left:321px;top:263.72px;color:#000;font-size:13.46px;font-family:'Liberation Mono', monospace;line-height:13px;clip-path:inset(0 0 0px 0)"><span style="color:#000">mov</span> <span style="color:#000080">dword ptr</span> <span style="color:#ff00ff">ds</span><span style="color:#000">:</span><span style="color:#000">[</span><span style="color:#000">760EED30</span><span style="color:#000">]</span><span style="color:#000">,</span><span style="color:#828200">1</span></div>
<div class="t" style="left:102px;top:276.78px;color:#808080;font-size:13.46px;font-family:'Liberation Mono', monospace;line-height:13px;clip-path:inset(0 0 0px 0)">760CA3B0</div>
<div class="t" style="left:205px;top:276.78px;color:#000;font-size:13.46px;font-family:'Liberation Mono', monospace;line-height:13px;clip-path:inset(0 0 0px 0)">6A FF</div>
<div class="t" style="left:321px;top:276.78px;color:#000;font-size:13.46px;font-family:'Liberation Mono', monospace;line-height:13px;clip-path:inset(0 0 0px 0)"><span style="color:#0000ff">push</span> <span style="color:#828200">FFFFFFFF</span></div>
<div class="t" style="left:102px;top:289.84px;color:#808080;font-size:13.46px;font-family:'Liberation Mono', monospace;line-height:13px;clip-path:inset(0 0 0px 0)">760CA3B2</div>
<div class="t" style="left:205px;top:289.84px;color:#000;font-size:13.46px;font-family:'Liberation Mono', monospace;line-height:13px;clip-path:inset(0 0 0px 0)">6A 00</div>
<div class="t" style="left:321px;top:289.84px;color:#000;font-size:13.46px;font-family:'Liberation Mono', monospace;line-height:13px;clip-path:inset(0 0 0px 0)"><span style="color:#0000ff">push</span> <span style="color:#828200">0</span></div>
<div style="left:466.44px;top:302.8px;width:8.08px;height:13px;background:#00ffff;"></div>
<div style="left:523.0px;top:302.8px;width:8.08px;height:13px;background:#00ffff;"></div>
<div class="t" style="left:102px;top:302.9px;color:#808080;font-size:13.46px;font-family:'Liberation Mono', monospace;line-height:13px;clip-path:inset(0 0 0px 0)">760CA3B4</div>
<div class="t" style="left:205px;top:302.9px;color:#000;font-size:13.46px;font-family:'Liberation Mono', monospace;line-height:13px;clip-path:inset(0 0 0px 0)">FF75 14</div>
<div class="t" style="left:321px;top:302.9px;color:#000;font-size:13.46px;font-family:'Liberation Mono', monospace;line-height:13px;clip-path:inset(0 0 0px 0)"><span style="color:#0000ff">push</span> <span style="color:#000080">dword ptr</span> <span style="color:#ff00ff">ss</span><span style="color:#000">:</span><span style="color:#000">[</span><span style="color:#b03434">ebp</span><span style="color:#f27711">+</span><span style="color:#828200">14</span><span style="color:#000">]</span></div>
<div style="left:466.44px;top:315.9px;width:8.08px;height:13px;background:#00ffff;"></div>
<div style="left:523.0px;top:315.9px;width:8.08px;height:13px;background:#00ffff;"></div>
<div class="t" style="left:102px;top:315.96px;color:#808080;font-size:13.46px;font-family:'Liberation Mono', monospace;line-height:13px;clip-path:inset(0 0 0px 0)">760CA3B7</div>
<div class="t" style="left:205px;top:315.96px;color:#000;font-size:13.46px;font-family:'Liberation Mono', monospace;line-height:13px;clip-path:inset(0 0 0px 0)">FF75 10</div>
<div class="t" style="left:321px;top:315.96px;color:#000;font-size:13.46px;font-family:'Liberation Mono', monospace;line-height:13px;clip-path:inset(0 0 0px 0)"><span style="color:#0000ff">push</span> <span style="color:#000080">dword ptr</span> <span style="color:#ff00ff">ss</span><span style="color:#000">:</span><span style="color:#000">[</span><span style="color:#b03434">ebp</span><span style="color:#f27711">+</span><span style="color:#828200">10</span><span style="color:#000">]</span></div>
<div style="left:466.44px;top:329.0px;width:8.08px;height:13px;background:#00ffff;"></div>
<div style="left:514.92px;top:329.0px;width:8.08px;height:13px;background:#00ffff;"></div>
<div class="t" style="left:102px;top:329.02px;color:#808080;font-size:13.46px;font-family:'Liberation Mono', monospace;line-height:13px;clip-path:inset(0 0 0px 0)">760CA3BA</div>
<div class="t" style="left:205px;top:329.02px;color:#000;font-size:13.46px;font-family:'Liberation Mono', monospace;line-height:13px;clip-path:inset(0 0 0px 0)">FF75 0C</div>
<div class="t" style="left:321px;top:329.02px;color:#000;font-size:13.46px;font-family:'Liberation Mono', monospace;line-height:13px;clip-path:inset(0 0 0px 0)"><span style="color:#0000ff">push</span> <span style="color:#000080">dword ptr</span> <span style="color:#ff00ff">ss</span><span style="color:#000">:</span><span style="color:#000">[</span><span style="color:#b03434">ebp</span><span style="color:#f27711">+</span><span style="color:#828200">C</span><span style="color:#000">]</span></div>
<div style="left:466.44px;top:342.1px;width:8.08px;height:13px;background:#00ffff;"></div>
<div style="left:514.92px;top:342.1px;width:8.08px;height:13px;background:#00ffff;"></div>
<div class="t" style="left:102px;top:342.08px;color:#808080;font-size:13.46px;font-family:'Liberation Mono', monospace;line-height:13px;clip-path:inset(0 0 0px 0)">760CA3BD</div>
<div class="t" style="left:205px;top:342.08px;color:#000;font-size:13.46px;font-family:'Liberation Mono', monospace;line-height:13px;clip-path:inset(0 0 0px 0)">FF75 08</div>
<div class="t" style="left:321px;top:342.08px;color:#000;font-size:13.46px;font-family:'Liberation Mono', monospace;line-height:13px;clip-path:inset(0 0 0px 0)"><span style="color:#0000ff">push</span> <span style="color:#000080">dword ptr</span> <span style="color:#ff00ff">ss</span><span style="color:#000">:</span><span style="color:#000">[</span><span style="color:#b03434">ebp</span><span style="color:#f27711">+</span><span style="color:#828200">8</span><span style="color:#000">]</span></div>
<div style="left:321.0px;top:355.2px;width:32.32px;height:13px;background:#00ffff;"></div>
<div style="left:361.4px;top:355.2px;width:218.16px;height:13px;background:#ffff00;"></div>
<div class="t" style="left:102px;top:355.14px;color:#808080;font-size:13.46px;font-family:'Liberation Mono', monospace;line-height:13px;clip-path:inset(0 0 0px 0)">760CA3C0</div>
<div class="t" style="left:205px;top:355.14px;color:#000;font-size:13.46px;font-family:'Liberation Mono', monospace;line-height:13px;clip-path:inset(0 0 0px 0)">E8 3B020000</div>
<div class="t" style="left:321px;top:355.14px;color:#000;font-size:13.46px;font-family:'Liberation Mono', monospace;line-height:13px;clip-path:inset(0 0 0px 0)"><span style="color:#000">call</span> <span style="color:#000">&lt;user32.MessageBoxTimeoutA&gt;</span></div>
<div class="t" style="left:102px;top:368.2px;color:#808080;font-size:13.46px;font-family:'Liberation Mono', monospace;line-height:13px;clip-path:inset(0 0 0px 0)">760CA3C5</div>
<div class="t" style="left:205px;top:368.2px;color:#000;font-size:13.46px;font-family:'Liberation Mono', monospace;line-height:13px;clip-path:inset(0 0 0px 0)">5D</div>
<div class="t" style="left:321px;top:368.2px;color:#000;font-size:13.46px;font-family:'Liberation Mono', monospace;line-height:13px;clip-path:inset(0 0 0px 0)"><span style="color:#0000ff">pop</span> <span style="color:#008300">ebp</span></div>
<div style="left:321.0px;top:381.4px;width:24.24px;height:13px;background:#00ffff;"></div>
<div class="t" style="left:102px;top:381.26px;color:#808080;font-size:13.46px;font-family:'Liberation Mono', monospace;line-height:13px;clip-path:inset(0 0 0px 0)">760CA3C6</div>
<div class="t" style="left:205px;top:381.26px;color:#000;font-size:13.46px;font-family:'Liberation Mono', monospace;line-height:13px;clip-path:inset(0 0 0px 0)">C2 1000</div>
<div class="t" style="left:321px;top:381.26px;color:#000;font-size:13.46px;font-family:'Liberation Mono', monospace;line-height:13px;clip-path:inset(0 0 0px 0)"><span style="color:#000">ret</span> <span style="color:#828200">10</span></div>
<div class="t" style="left:102px;top:394.32px;color:#808080;font-size:13.46px;font-family:'Liberation Mono', monospace;line-height:13px;clip-path:inset(0 0 0px 0)">760CA3C9</div>
<div class="t" style="left:205px;top:394.32px;color:#000;font-size:13.46px;font-family:'Liberation Mono', monospace;line-height:13px;clip-path:inset(0 0 0px 0)">CC</div>
<div class="t" style="left:321px;top:394.32px;color:#000;font-size:13.46px;font-family:'Liberation Mono', monospace;line-height:13px;clip-path:inset(0 0 0px 0)"><span style="color:#000">int3</span></div>
<div class="t" style="left:102px;top:407.38px;color:#808080;font-size:13.46px;font-family:'Liberation Mono', monospace;line-height:13px;clip-path:inset(0 0 0px 0)">760CA3CA</div>
<div class="t" style="left:205px;top:407.38px;color:#000;font-size:13.46px;font-family:'Liberation Mono', monospace;line-height:13px;clip-path:inset(0 0 0px 0)">CC</div>
<div class="t" style="left:321px;top:407.38px;color:#000;font-size:13.46px;font-family:'Liberation Mono', monospace;line-height:13px;clip-path:inset(0 0 0px 0)"><span style="color:#000">int3</span></div>
<div class="t" style="left:102px;top:420.44px;color:#808080;font-size:13.46px;font-family:'Liberation Mono', monospace;line-height:13px;clip-path:inset(0 0 0px 0)">760CA3CB</div>
<div class="t" style="left:205px;top:420.44px;color:#000;font-size:13.46px;font-family:'Liberation Mono', monospace;line-height:13px;clip-path:inset(0 0 0px 0)">CC</div>
<div class="t" style="left:321px;top:420.44px;color:#000;font-size:13.46px;font-family:'Liberation Mono', monospace;line-height:13px;clip-path:inset(0 0 0px 0)"><span style="color:#000">int3</span></div>
<div class="t" style="left:102px;top:433.5px;color:#808080;font-size:13.46px;font-family:'Liberation Mono', monospace;line-height:13px;clip-path:inset(0 0 0px 0)">760CA3CC</div>
<div class="t" style="left:205px;top:433.5px;color:#000;font-size:13.46px;font-family:'Liberation Mono', monospace;line-height:13px;clip-path:inset(0 0 0px 0)">CC</div>
<div class="t" style="left:321px;top:433.5px;color:#000;font-size:13.46px;font-family:'Liberation Mono', monospace;line-height:13px;clip-path:inset(0 0 0px 0)"><span style="color:#000">int3</span></div>
<div class="t" style="left:102px;top:446.56px;color:#808080;font-size:13.46px;font-family:'Liberation Mono', monospace;line-height:13px;clip-path:inset(0 0 0px 0)">760CA3CD</div>
<div class="t" style="left:205px;top:446.56px;color:#000;font-size:13.46px;font-family:'Liberation Mono', monospace;line-height:13px;clip-path:inset(0 0 0px 0)">CC</div>
<div class="t" style="left:321px;top:446.56px;color:#000;font-size:13.46px;font-family:'Liberation Mono', monospace;line-height:13px;clip-path:inset(0 0 0px 0)"><span style="color:#000">int3</span></div>
<div class="t" style="left:102px;top:459.62px;color:#808080;font-size:13.46px;font-family:'Liberation Mono', monospace;line-height:13px;clip-path:inset(0 0 0px 0)">760CA3CE</div>
<div class="t" style="left:205px;top:459.62px;color:#000;font-size:13.46px;font-family:'Liberation Mono', monospace;line-height:13px;clip-path:inset(0 0 0px 0)">CC</div>
<div class="t" style="left:321px;top:459.62px;color:#000;font-size:13.46px;font-family:'Liberation Mono', monospace;line-height:13px;clip-path:inset(0 0 0px 0)"><span style="color:#000">int3</span></div>
<div class="t" style="left:102px;top:472.68px;color:#808080;font-size:13.46px;font-family:'Liberation Mono', monospace;line-height:13px;clip-path:inset(0 0 5px 0)">760CA3CF</div>
<div class="t" style="left:205px;top:472.68px;color:#000;font-size:13.46px;font-family:'Liberation Mono', monospace;line-height:13px;clip-path:inset(0 0 5px 0)">CC</div>
<div class="t" style="left:321px;top:472.68px;color:#000;font-size:13.46px;font-family:'Liberation Mono', monospace;line-height:13px;clip-path:inset(0 0 5px 0)"><span style="color:#000">int3</span></div>
<div style="left:245.4px;top:158.0px;width:64.64px;height:1px;background:#000;"></div>
<div style="left:229.24px;top:197.3px;width:64.64px;height:1px;background:#000;"></div>
<div style="left:245.4px;top:275.9px;width:64.64px;height:1px;background:#000;"></div>
<svg style="left:189.5px;top:163.7px" width="7" height="5"><path d="M0.6 0.8 L3 3.2 L5.4 0.8" stroke="#ff0000" stroke-width="1" fill="none"/></svg>
<svg style="left:189.5px;top:255.4px" width="7" height="5"><path d="M0.6 0.8 L3 3.2 L5.4 0.8" stroke="#ff0000" stroke-width="1" fill="none"/></svg>
<div style="left:171.5px;top:107px;width:1px;height:373px;background:#808080;"></div>
<div style="left:316.5px;top:107px;width:1px;height:373px;background:#808080;"></div>
<div style="left:637px;top:107px;width:21px;height:373px;background:#f0f0f0;"></div>
<div style="left:645px;top:129px;width:6px;height:22px;background:#868686;"></div>
<div style="left:99px;top:480px;width:559px;height:21px;background:#f0f0f0;"></div>
<div style="left:121px;top:488px;width:194px;height:6px;background:#868686;"></div>
<div style="left:661.5px;top:107.5px;width:370px;height:25.5px;background:#fdfdfd;border:1px solid #c8c8c8;border-radius:4px"></div>
<div class="t" style="left:812px;top:113px;color:#000;font-size:13.33px;font-family:'Liberation Mono', monospace;line-height:15px;">Hide FPU</div>
<div style="left:660px;top:134px;width:364px;height:319px;background:#f0f0f0;border-left:1px solid #a0a8b0;border-top:1px solid #a0a8b0"></div>
<div style="left:661px;top:135px;width:347px;height:295px;background:#fff8f0;"></div>
<div style="left:1016px;top:155px;width:6px;height:64px;background:#868686;"></div>
<div style="left:681px;top:439px;width:104px;height:6px;background:#868686;"></div>
<div class="t" style="left:668.6px;top:141px;color:#000;font-size:13.46px;font-family:'Liberation Mono', monospace;line-height:14px;">EAX   <span style="color:#ff0000">00000031</span>     '1'</div>
<div class="t" style="left:668.6px;top:155px;color:#000;font-size:13.46px;font-family:'Liberation Mono', monospace;line-height:14px;">EBX   <span style="color:#ff0000">004A0778</span>     "</div>
<svg style="left:830.20px;top:153px" width="177.80" height="14"><rect x="0" y="0" width="177.80" height="14" fill="url(#cjk)"/></svg>
<div class="t" style="left:668.6px;top:169px;color:#000;font-size:13.46px;font-family:'Liberation Mono', monospace;line-height:14px;">ECX   <span style="color:#ff0000">76071D20</span>     user32.76071D20</div>
<div class="t" style="left:668.6px;top:183px;color:#000;font-size:13.46px;font-family:'Liberation Mono', monospace;line-height:14px;">EDX   <span style="color:#ff0000">00000000</span>     </div>
<div class="t" style="left:668.6px;top:197px;color:#000;font-size:13.46px;font-family:'Liberation Mono', monospace;line-height:14px;">EBP   <span style="color:#ff0000">0019FDCC</span>     </div>
<div style="left:717.08px;top:211px;width:64.64px;height:14px;background:#eeeeee;"></div>
<div class="t" style="left:668.6px;top:211px;color:#000;font-size:13.46px;font-family:'Liberation Mono', monospace;line-height:14px;">ESP   <span style="color:#ff0000">0019FDA4</span>     </div>
<div class="t" style="left:668.6px;top:225px;color:#000;font-size:13.46px;font-family:'Liberation Mono', monospace;line-height:14px;">ESI   <span style="color:#ff0000">0040218E</span>     crackme.0040218E</div>
<div class="t" style="left:668.6px;top:239px;color:#000;font-size:13.46px;font-family:'Liberation Mono', monospace;line-height:14px;">EDI   <span style="color:#ff0000">00000111</span>     L'đ'</div>
<div class="t" style="left:668.6px;top:267px;color:#000;font-size:13.46px;font-family:'Liberation Mono', monospace;line-height:14px;">EIP   <span style="color:#ff0000">760CA380</span>     &lt;user32.MessageBoxA&gt;</div>
<div class="t" style="left:668.6px;top:295px;color:#000;font-size:13.46px;font-family:'Liberation Mono', monospace;line-height:14px;">EFLAGS   <span style="color:#ff0000">00000385</span></div>
<div class="t" style="left:668.6px;top:309px;color:#000;font-size:13.46px;font-family:'Liberation Mono', monospace;line-height:14px;">ZF <span style="color:#ff0000">0</span>  PF 1  AF 0</div>
<div class="t" style="left:668.6px;top:323px;color:#000;font-size:13.46px;font-family:'Liberation Mono', monospace;line-height:14px;">OF 0  SF <span style="color:#ff0000">1</span>  DF 0</div>
<div class="t" style="left:668.6px;top:337px;color:#000;font-size:13.46px;font-family:'Liberation Mono', monospace;line-height:14px;">CF <span style="color:#ff0000">1</span>  TF <span style="color:#ff0000">1</span>  IF 1</div>
<div class="t" style="left:668.6px;top:365px;color:#000;font-size:13.46px;font-family:'Liberation Mono', monospace;line-height:14px;">LastError  <span style="color:#ff0000">00000000 (ERROR_SUCCESS)</span></div>
<div class="t" style="left:668.6px;top:379px;color:#000;font-size:13.46px;font-family:'Liberation Mono', monospace;line-height:14px;">LastStatus <span style="color:#ff0000">C0000034 (STATUS_OBJECT_NAME_NOT_FOUND)</span></div>
<div class="t" style="left:668.6px;top:394px;color:#000;font-size:13.46px;font-family:'Liberation Mono', monospace;line-height:14px;"></div>
<div class="t" style="left:668.6px;top:407px;color:#000;font-size:13.46px;font-family:'Liberation Mono', monospace;line-height:14px;">GS 002B  FS 0053</div>
<div class="t" style="left:668.6px;top:421px;color:#000;font-size:13.46px;font-family:'Liberation Mono', monospace;line-height:14px;clip-path:inset(0 0 5px 0)">ES 002B  DS 002B</div>
<div style="left:1008px;top:135px;width:16px;height:295px;background:#f0f0f0;"></div>
<div style="left:1016px;top:155px;width:6px;height:64px;background:#868686;"></div>
<div style="left:661px;top:454px;width:250px;height:20px;background:#fdfdfd;border:1px solid #d0d0d0;border-radius:3px"></div>
<div class="t" style="left:664px;top:457px;color:#000;font-size:13.43px;font-family:'Liberation Mono', monospace;line-height:15px;transform:scaleY(1.15);transform-origin:0 2px;-webkit-text-stroke:0.15px #000;">Default (stdcall)</div>
<svg style="left:898px;top:461px" width="9" height="5"><path d="M0 0 L9 0 L4.5 5z" fill="#000"/></svg>
<div style="left:915px;top:454px;width:44px;height:20px;background:#fdfdfd;border:1px solid #d0d0d0;border-radius:3px"></div>
<div class="t" style="left:918px;top:457px;color:#000;font-size:13.43px;font-family:'Liberation Mono', monospace;line-height:15px;transform:scaleY(1.15);transform-origin:0 2px;-webkit-text-stroke:0.15px #000;">5</div>
<div style="left:944px;top:455px;width:14px;height:18px;background:#f0f0f0;border-left:1px solid #d8d8d8"></div>
<svg style="left:947px;top:457px" width="8" height="14"><path d="M0 5 L4 1 L8 5z M0 9 L4 13 L8 9z" fill="#000"/></svg>
<div style="left:963.5px;top:455.5px;width:15px;height:15px;background:#fff;border:1px solid #333;border-radius:3px"></div>
<div class="t" style="left:984px;top:457px;color:#000;font-size:13.43px;font-family:'Liberation Mono', monospace;line-height:15px;transform:scaleY(1.15);transform-origin:0 2px;-webkit-text-stroke:0.15px #000;">Unlock</div>
<div style="left:660px;top:474px;width:364px;height:86px;background:#f0f0f0;border-left:1px solid #a0a8b0;border-top:1px solid #a0a8b0"></div>
<div style="left:661px;top:475px;width:347px;height:84px;background:#fff8f0;"></div>
<div style="left:661px;top:475.5px;width:347px;height:12px;background:#c0c0c0;"></div>
<div class="t" style="left:664.5px;top:476.0px;color:#000;font-size:13.46px;font-family:'Liberation Mono', monospace;line-height:13px;">1: [esp+4] 004A0778 "</div>
<svg style="left:834.18px;top:475.5px" width="173.82" height="14"><rect x="0" y="0" width="173.82" height="14" fill="url(#cjk)"/></svg>
<div class="t" style="left:664.5px;top:488.7px;color:#000;font-size:13.46px;font-family:'Liberation Mono', monospace;line-height:13px;">2: [esp+8] 00402169 "No luck there, mate!"</div>
<div class="t" style="left:664.5px;top:501.4px;color:#000;font-size:13.46px;font-family:'Liberation Mono', monospace;line-height:13px;">3: [esp+C] 00402160 "No luck!"</div>
<div class="t" style="left:664.5px;top:514.1px;color:#000;font-size:13.46px;font-family:'Liberation Mono', monospace;line-height:13px;">4: [esp+10] 00000030</div>
<div class="t" style="left:664.5px;top:526.8px;color:#000;font-size:13.46px;font-family:'Liberation Mono', monospace;line-height:13px;">5: [esp+14] 00401232 "Ph~!@"</div>
<svg style="left:1011px;top:480px" width="11" height="8"><path d="M0 7 L5.5 1 L11 7z" fill="#b0b0b0"/></svg>
<svg style="left:1011px;top:544px" width="11" height="8"><path d="M0 1 L5.5 7 L11 1z" fill="#b0b0b0"/></svg>
<div style="left:0px;top:502px;width:659px;height:59px;background:#fff8f0;border-top:1px solid #a0a8b0;border-bottom:1px solid #a0a8b0;border-right:1px solid #a0a8b0"></div>
<div class="t" style="left:-3.6px;top:504px;color:#000;font-size:13.46px;font-family:'Liberation Mono', monospace;line-height:13px;">edi=111 L'đ'</div>
<div class="t" style="left:-3.6px;top:543px;color:#000;font-size:13.46px;font-family:'Liberation Mono', monospace;line-height:13px;">.text:760CA380 user32.dll:$8A380 #89780 &lt;MessageBoxA&gt;</div>
<div style="left:0px;top:561px;width:620px;height:30px;background:#f0f0f0;"></div>
<div style="left:0px;top:563px;width:96px;height:27px;background:#fbfbfb;"></div>
<div class="t" style="left:27px;top:570px;color:#000;font-size:13.43px;font-family:'Liberation Mono', monospace;line-height:15px;transform:scaleY(1.15);transform-origin:0 2px;-webkit-text-stroke:0.15px #000;">Dump 1</div>
<svg style="left:5px;top:569px" width="17" height="15" viewBox="0 0 17 15"><rect x="5" y="0.5" width="11" height="11" rx="1" fill="#d8d8d8" stroke="#888" stroke-width="0.8"/><path d="M8 1v10M11 1v10M14 1v10" stroke="#999" stroke-width="0.8"/><rect x="0.5" y="3.5" width="5" height="8" fill="#e8b020" stroke="#8a6a10" stroke-width="0.6"/><rect x="1.5" y="4.5" width="3" height="3" fill="#3a7ad0"/><circle cx="3" cy="12.5" r="1.6" fill="#333"/><circle cx="13" cy="12.5" r="1.6" fill="#333"/></svg>
<div style="left:96px;top:565px;width:100px;height:25px;background:#f0f0f0;border-top:1px solid #e2e2e2;border-right:1px solid #e2e2e2"></div>
<div class="t" style="left:131px;top:570px;color:#000;font-size:13.43px;font-family:'Liberation Mono', monospace;line-height:15px;transform:scaleY(1.15);transform-origin:0 2px;-webkit-text-stroke:0.15px #000;">Dump 2</div>
<svg style="left:109px;top:569px" width="17" height="15" viewBox="0 0 17 15"><rect x="5" y="0.5" width="11" height="11" rx="1" fill="#d8d8d8" stroke="#888" stroke-width="0.8"/><path d="M8 1v10M11 1v10M14 1v10" stroke="#999" stroke-width="0.8"/><rect x="0.5" y="3.5" width="5" height="8" fill="#e8b020" stroke="#8a6a10" stroke-width="0.6"/><rect x="1.5" y="4.5" width="3" height="3" fill="#3a7ad0"/><circle cx="3" cy="12.5" r="1.6" fill="#333"/><circle cx="13" cy="12.5" r="1.6" fill="#333"/></svg>
<div style="left:196px;top:565px;width:101px;height:25px;background:#f0f0f0;border-top:1px solid #e2e2e2;border-right:1px solid #e2e2e2"></div>
<div class="t" style="left:234px;top:570px;color:#000;font-size:13.43px;font-family:'Liberation Mono', monospace;line-height:15px;transform:scaleY(1.15);transform-origin:0 2px;-webkit-text-stroke:0.15px #000;">Dump 3</div>
<svg style="left:212px;top:569px" width="17" height="15" viewBox="0 0 17 15"><rect x="5" y="0.5" width="11" height="11" rx="1" fill="#d8d8d8" stroke="#888" stroke-width="0.8"/><path d="M8 1v10M11 1v10M14 1v10" stroke="#999" stroke-width="0.8"/><rect x="0.5" y="3.5" width="5" height="8" fill="#e8b020" stroke="#8a6a10" stroke-width="0.6"/><rect x="1.5" y="4.5" width="3" height="3" fill="#3a7ad0"/><circle cx="3" cy="12.5" r="1.6" fill="#333"/><circle cx="13" cy="12.5" r="1.6" fill="#333"/></svg>
<div style="left:297px;top:565px;width:103px;height:25px;background:#f0f0f0;border-top:1px solid #e2e2e2;border-right:1px solid #e2e2e2"></div>
<div class="t" style="left:337px;top:570px;color:#000;font-size:13.43px;font-family:'Liberation Mono', monospace;line-height:15px;transform:scaleY(1.15);transform-origin:0 2px;-webkit-text-stroke:0.15px #000;">Dump 4</div>
<svg style="left:315px;top:569px" width="17" height="15" viewBox="0 0 17 15"><rect x="5" y="0.5" width="11" height="11" rx="1" fill="#d8d8d8" stroke="#888" stroke-width="0.8"/><path d="M8 1v10M11 1v10M14 1v10" stroke="#999" stroke-width="0.8"/><rect x="0.5" y="3.5" width="5" height="8" fill="#e8b020" stroke="#8a6a10" stroke-width="0.6"/><rect x="1.5" y="4.5" width="3" height="3" fill="#3a7ad0"/><circle cx="3" cy="12.5" r="1.6" fill="#333"/><circle cx="13" cy="12.5" r="1.6" fill="#333"/></svg>
<div style="left:400px;top:565px;width:103px;height:25px;background:#f0f0f0;border-top:1px solid #e2e2e2;border-right:1px solid #e2e2e2"></div>
<div class="t" style="left:439px;top:570px;color:#000;font-size:13.43px;font-family:'Liberation Mono', monospace;line-height:15px;transform:scaleY(1.15);transform-origin:0 2px;-webkit-text-stroke:0.15px #000;">Dump 5</div>
<svg style="left:417px;top:569px" width="17" height="15" viewBox="0 0 17 15"><rect x="5" y="0.5" width="11" height="11" rx="1" fill="#d8d8d8" stroke="#888" stroke-width="0.8"/><path d="M8 1v10M11 1v10M14 1v10" stroke="#999" stroke-width="0.8"/><rect x="0.5" y="3.5" width="5" height="8" fill="#e8b020" stroke="#8a6a10" stroke-width="0.6"/><rect x="1.5" y="4.5" width="3" height="3" fill="#3a7ad0"/><circle cx="3" cy="12.5" r="1.6" fill="#333"/><circle cx="13" cy="12.5" r="1.6" fill="#333"/></svg>
<div style="left:503px;top:565px;width:87px;height:25px;background:#f0f0f0;border-top:1px solid #e2e2e2;border-right:1px solid #e2e2e2"></div>
<div class="t" style="left:540px;top:570px;color:#000;font-size:13.43px;font-family:'Liberation Mono', monospace;line-height:15px;transform:scaleY(1.15);transform-origin:0 2px;-webkit-text-stroke:0.15px #000;">Watch</div>
<svg style="left:518.5px;top:568.5px" width="16" height="15" viewBox="0 0 16 15"><path d="M1 6 L2 0.5 L6 3.5 L10 3.5 L14 0.5 L15 6 Q16 12 8 14 Q0 12 1 6z" fill="#c8883a" stroke="#8a5a20" stroke-width="0.5"/><path d="M3.5 8 Q8 4 12.5 8 Q12 12.5 8 13 Q4 12.5 3.5 8z" fill="#f4dcb0"/><circle cx="5.6" cy="7.6" r="1" fill="#222"/><circle cx="10.4" cy="7.6" r="1" fill="#222"/><ellipse cx="8" cy="10.3" rx="1.3" ry="0.9" fill="#333"/></svg>
<div style="left:588px;top:565px;width:15px;height:22px;background:#f4f4f4;border:1px solid #a8a8a8;border-radius:2px"></div>
<svg style="left:592px;top:571px" width="8" height="11"><path d="M6 0 L0 5.5 L6 11z" fill="#b0b0b0"/></svg>
<div style="left:604px;top:565px;width:15px;height:22px;background:#f4f4f4;border:1px solid #a8a8a8;border-radius:2px"></div>
<svg style="left:608px;top:571px" width="8" height="11"><path d="M0 0 L6 5.5 L0 11z" fill="#000"/></svg>
<div style="left:0px;top:590px;width:619px;height:239px;background:#f0f0f0;border-top:1px solid #a0a8b0;border-bottom:1px solid #a0a8b0;border-right:1px solid #a0a8b0"></div>
<div style="left:0px;top:607px;width:596px;height:201px;background:#fff8f0;"></div>
<div style="left:0px;top:591px;width:596px;height:17px;background:#c0c0c0;border-bottom:2px solid #909090"></div>
<div style="left:63px;top:592px;width:2px;height:15px;background:#909090;"></div>
<div style="left:450px;top:592px;width:2px;height:15px;background:#909090;"></div>
<div style="left:586px;top:592px;width:2px;height:15px;background:#909090;"></div>
<div class="t" style="left:-5px;top:592px;color:#000;font-size:13.46px;font-family:'Liberation Mono', monospace;line-height:15px;">Address</div>
<div class="t" style="left:68px;top:592px;color:#000;font-size:13.46px;font-family:'Liberation Mono', monospace;line-height:15px;">Hex</div>
<div class="t" style="left:455px;top:592px;color:#000;font-size:13.46px;font-family:'Liberation Mono', monospace;line-height:15px;">ASCII</div>
<div style="left:66px;top:608px;width:22px;height:13px;background:#c0c0c0;"></div>
<div style="left:455px;top:608px;width:9px;height:13px;background:#c0c0c0;"></div>
<div class="t" style="left:-5.5px;top:607.8px;color:#000;font-size:13.46px;font-family:'Liberation Mono', monospace;line-height:13px;clip-path:inset(0 0 0px 0)">77491000</div>
<div class="t" style="left:68.1px;top:607.8px;color:#000;font-size:13.46px;font-family:'Liberation Mono', monospace;line-height:13px;clip-path:inset(0 0 0px 0)"><span style="color:#000000">14</span> <span style="color:#008000">00</span> <span style="color:#000000">16</span> <span style="color:#008000">00</span> <span style="color:#000000">DC</span> <span style="color:#000000">A4</span> <span style="color:#800080">49</span> <span style="color:#800080">77</span> <span style="color:#008000">00</span> <span style="color:#008000">00</span> <span style="color:#000000">02</span> <span style="color:#008000">00</span> <span style="color:#000000">E4</span> <span style="color:#800080">57</span> <span style="color:#800080">49</span> <span style="color:#800080">77</span> </div>
<div class="t" style="left:455.5px;top:607.8px;color:#000;font-size:13.46px;font-family:'Liberation Mono', monospace;line-height:13px;clip-path:inset(0 0 0px 0)"><span style="color:#000000">.</span><span style="color:#008000">.</span><span style="color:#000000">.</span><span style="color:#008000">.</span><span style="color:#000000">Ü</span><span style="color:#000000">¤</span><span style="color:#800080">I</span><span style="color:#800080">w</span><span style="color:#008000">.</span><span style="color:#008000">.</span><span style="color:#000000">.</span><span style="color:#008000">.</span><span style="color:#000000">ä</span><span style="color:#800080">W</span><span style="color:#800080">I</span><span style="color:#800080">w</span></div>
<div class="t" style="left:-5.5px;top:620.92px;color:#000;font-size:13.46px;font-family:'Liberation Mono', monospace;line-height:13px;clip-path:inset(0 0 0px 0)">77491010</div>
<div class="t" style="left:68.1px;top:620.92px;color:#000;font-size:13.46px;font-family:'Liberation Mono', monospace;line-height:13px;clip-path:inset(0 0 0px 0)"><span style="color:#000000">18</span> <span style="color:#008000">00</span> <span style="color:#000000">1A</span> <span style="color:#008000">00</span> <span style="color:#000000">F4</span> <span style="color:#000000">A4</span> <span style="color:#800080">49</span> <span style="color:#800080">77</span> <span style="color:#000000">1C</span> <span style="color:#008000">00</span> <span style="color:#000000">1E</span> <span style="color:#008000">00</span> <span style="color:#000000">10</span> <span style="color:#000000">A5</span> <span style="color:#800080">49</span> <span style="color:#800080">77</span> </div>
<div class="t" style="left:455.5px;top:620.92px;color:#000;font-size:13.46px;font-family:'Liberation Mono', monospace;line-height:13px;clip-path:inset(0 0 0px 0)"><span style="color:#000000">.</span><span style="color:#008000">.</span><span style="color:#000000">.</span><span style="color:#008000">.</span><span style="color:#000000">ô</span><span style="color:#000000">¤</span><span style="color:#800080">I</span><span style="color:#800080">w</span><span style="color:#000000">.</span><span style="color:#008000">.</span><span style="color:#000000">.</span><span style="color:#008000">.</span><span style="color:#000000">.</span><span style="color:#000000">¥</span><span style="color:#800080">I</span><span style="color:#800080">w</span></div>
<div class="t" style="left:-5.5px;top:634.04px;color:#000;font-size:13.46px;font-family:'Liberation Mono', monospace;line-height:13px;clip-path:inset(0 0 0px 0)">77491020</div>
<div class="t" style="left:68.1px;top:634.04px;color:#000;font-size:13.46px;font-family:'Liberation Mono', monospace;line-height:13px;clip-path:inset(0 0 0px 0)"><span style="color:#000000">18</span> <span style="color:#008000">00</span> <span style="color:#008000">00</span> <span style="color:#008000">00</span> <span style="color:#008000">00</span> <span style="color:#008000">00</span> <span style="color:#008000">00</span> <span style="color:#008000">00</span> <span style="color:#800080">74</span> <span style="color:#000000">19</span> <span style="color:#800080">49</span> <span style="color:#800080">77</span> <span style="color:#800080">40</span> <span style="color:#008000">00</span> <span style="color:#008000">00</span> <span style="color:#008000">00</span> </div>
<div class="t" style="left:455.5px;top:634.04px;color:#000;font-size:13.46px;font-family:'Liberation Mono', monospace;line-height:13px;clip-path:inset(0 0 0px 0)"><span style="color:#000000">.</span><span style="color:#008000">.</span><span style="color:#008000">.</span><span style="color:#008000">.</span><span style="color:#008000">.</span><span style="color:#008000">.</span><span style="color:#008000">.</span><span style="color:#008000">.</span><span style="color:#800080">t</span><span style="color:#000000">.</span><span style="color:#800080">I</span><span style="color:#800080">w</span><span style="color:#800080">@</span><span style="color:#008000">.</span><span style="color:#008000">.</span><span style="color:#008000">.</span></div>
<div class="t" style="left:-5.5px;top:647.16px;color:#000;font-size:13.46px;font-family:'Liberation Mono', monospace;line-height:13px;clip-path:inset(0 0 0px 0)">77491030</div>
<div class="t" style="left:68.1px;top:647.16px;color:#000;font-size:13.46px;font-family:'Liberation Mono', monospace;line-height:13px;clip-path:inset(0 0 0px 0)"><span style="color:#008000">00</span> <span style="color:#008000">00</span> <span style="color:#008000">00</span> <span style="color:#008000">00</span> <span style="color:#008000">00</span> <span style="color:#008000">00</span> <span style="color:#008000">00</span> <span style="color:#008000">00</span> <span style="color:#800080">41</span> <span style="color:#800080">63</span> <span style="color:#800080">4D</span> <span style="color:#800080">67</span> <span style="color:#800000">FF</span> <span style="color:#800000">FF</span> <span style="color:#800000">FF</span> <span style="color:#808000">7F</span> </div>
<div class="t" style="left:455.5px;top:647.16px;color:#000;font-size:13.46px;font-family:'Liberation Mono', monospace;line-height:13px;clip-path:inset(0 0 0px 0)"><span style="color:#008000">.</span><span style="color:#008000">.</span><span style="color:#008000">.</span><span style="color:#008000">.</span><span style="color:#008000">.</span><span style="color:#008000">.</span><span style="color:#008000">.</span><span style="color:#008000">.</span><span style="color:#800080">A</span><span style="color:#800080">c</span><span style="color:#800080">M</span><span style="color:#800080">g</span><span style="color:#800000">ÿ</span><span style="color:#800000">ÿ</span><span style="color:#800000">ÿ</span><span style="color:#808000">.</span></div>
<div class="t" style="left:-5.5px;top:660.28px;color:#000;font-size:13.46px;font-family:'Liberation Mono', monospace;line-height:13px;clip-path:inset(0 0 0px 0)">77491040</div>
<div class="t" style="left:68.1px;top:660.28px;color:#000;font-size:13.46px;font-family:'Liberation Mono', monospace;line-height:13px;clip-path:inset(0 0 0px 0)"><span style="color:#000000">02</span> <span style="color:#008000">00</span> <span style="color:#008000">00</span> <span style="color:#008000">00</span> <span style="color:#000000">D4</span> <span style="color:#800080">4C</span> <span style="color:#800080">49</span> <span style="color:#800080">77</span> <span style="color:#008000">00</span> <span style="color:#008000">00</span> <span style="color:#008000">00</span> <span style="color:#008000">00</span> <span style="color:#008000">00</span> <span style="color:#008000">00</span> <span style="color:#008000">00</span> <span style="color:#008000">00</span> </div>
<div class="t" style="left:455.5px;top:660.28px;color:#000;font-size:13.46px;font-family:'Liberation Mono', monospace;line-height:13px;clip-path:inset(0 0 0px 0)"><span style="color:#000000">.</span><span style="color:#008000">.</span><span style="color:#008000">.</span><span style="color:#008000">.</span><span style="color:#000000">Ô</span><span style="color:#800080">L</span><span style="color:#800080">I</span><span style="color:#800080">w</span><span style="color:#008000">.</span><span style="color:#008000">.</span><span style="color:#008000">.</span><span style="color:#008000">.</span><span style="color:#008000">.</span><span style="color:#008000">.</span><span style="color:#008000">.</span><span style="color:#008000">.</span></div>
<div class="t" style="left:-5.5px;top:673.4px;color:#000;font-size:13.46px;font-family:'Liberation Mono', monospace;line-height:13px;clip-path:inset(0 0 0px 0)">77491050</div>
<div class="t" style="left:68.1px;top:673.4px;color:#000;font-size:13.46px;font-family:'Liberation Mono', monospace;line-height:13px;clip-path:inset(0 0 0px 0)"><span style="color:#008000">00</span> <span style="color:#008000">00</span> <span style="color:#008000">00</span> <span style="color:#008000">00</span> <span style="color:#008000">00</span> <span style="color:#008000">00</span> <span style="color:#008000">00</span> <span style="color:#008000">00</span> <span style="color:#008000">00</span> <span style="color:#008000">00</span> <span style="color:#008000">00</span> <span style="color:#008000">00</span> <span style="color:#008000">00</span> <span style="color:#008000">00</span> <span style="color:#008000">00</span> <span style="color:#008000">00</span> </div>
<div class="t" style="left:455.5px;top:673.4px;color:#000;font-size:13.46px;font-family:'Liberation Mono', monospace;line-height:13px;clip-path:inset(0 0 0px 0)"><span style="color:#008000">.</span><span style="color:#008000">.</span><span style="color:#008000">.</span><span style="color:#008000">.</span><span style="color:#008000">.</span><span style="color:#008000">.</span><span style="color:#008000">.</span><span style="color:#008000">.</span><span style="color:#008000">.</span><span style="color:#008000">.</span><span style="color:#008000">.</span><span style="color:#008000">.</span><span style="color:#008000">.</span><span style="color:#008000">.</span><span style="color:#008000">.</span><span style="color:#008000">.</span></div>
<div class="t" style="left:-5.5px;top:686.52px;color:#000;font-size:13.46px;font-family:'Liberation Mono', monospace;line-height:13px;clip-path:inset(0 0 0px 0)">77491060</div>
<div class="t" style="left:68.1px;top:686.52px;color:#000;font-size:13.46px;font-family:'Liberation Mono', monospace;line-height:13px;clip-path:inset(0 0 0px 0)"><span style="color:#008000">00</span> <span style="color:#008000">00</span> <span style="color:#008000">00</span> <span style="color:#008000">00</span> <span style="color:#008000">00</span> <span style="color:#008000">00</span> <span style="color:#008000">00</span> <span style="color:#008000">00</span> <span style="color:#008000">00</span> <span style="color:#008000">00</span> <span style="color:#008000">00</span> <span style="color:#008000">00</span> <span style="color:#008000">00</span> <span style="color:#008000">00</span> <span style="color:#008000">00</span> <span style="color:#008000">00</span> </div>
<div class="t" style="left:455.5px;top:686.52px;color:#000;font-size:13.46px;font-family:'Liberation Mono', monospace;line-height:13px;clip-path:inset(0 0 0px 0)"><span style="color:#008000">.</span><span style="color:#008000">.</span><span style="color:#008000">.</span><span style="color:#008000">.</span><span style="color:#008000">.</span><span style="color:#008000">.</span><span style="color:#008000">.</span><span style="color:#008000">.</span><span style="color:#008000">.</span><span style="color:#008000">.</span><span style="color:#008000">.</span><span style="color:#008000">.</span><span style="color:#008000">.</span><span style="color:#008000">.</span><span style="color:#008000">.</span><span style="color:#008000">.</span></div>
<div class="t" style="left:-5.5px;top:699.64px;color:#000;font-size:13.46px;font-family:'Liberation Mono', monospace;line-height:13px;clip-path:inset(0 0 0px 0)">77491070</div>
<div class="t" style="left:68.1px;top:699.64px;color:#000;font-size:13.46px;font-family:'Liberation Mono', monospace;line-height:13px;clip-path:inset(0 0 0px 0)"><span style="color:#008000">00</span> <span style="color:#008000">00</span> <span style="color:#008000">00</span> <span style="color:#008000">00</span> <span style="color:#008000">00</span> <span style="color:#008000">00</span> <span style="color:#008000">00</span> <span style="color:#008000">00</span> <span style="color:#008000">00</span> <span style="color:#008000">00</span> <span style="color:#008000">00</span> <span style="color:#008000">00</span> <span style="color:#008000">00</span> <span style="color:#008000">00</span> <span style="color:#008000">00</span> <span style="color:#008000">00</span> </div>
<div class="t" style="left:455.5px;top:699.64px;color:#000;font-size:13.46px;font-family:'Liberation Mono', monospace;line-height:13px;clip-path:inset(0 0 0px 0)"><span style="color:#008000">.</span><span style="color:#008000">.</span><span style="color:#008000">.</span><span style="color:#008000">.</span><span style="color:#008000">.</span><span style="color:#008000">.</span><span style="color:#008000">.</span><span style="color:#008000">.</span><span style="color:#008000">.</span><span style="color:#008000">.</span><span style="color:#008000">.</span><span style="color:#008000">.</span><span style="color:#008000">.</span><span style="color:#008000">.</span><span style="color:#008000">.</span><span style="color:#008000">.</span></div>
<div class="t" style="left:-5.5px;top:712.76px;color:#000;font-size:13.46px;font-family:'Liberation Mono', monospace;line-height:13px;clip-path:inset(0 0 0px 0)">77491080</div>
<div class="t" style="left:68.1px;top:712.76px;color:#000;font-size:13.46px;font-family:'Liberation Mono', monospace;line-height:13px;clip-path:inset(0 0 0px 0)"><span style="color:#008000">00</span> <span style="color:#008000">00</span> <span style="color:#008000">00</span> <span style="color:#008000">00</span> <span style="color:#008000">00</span> <span style="color:#008000">00</span> <span style="color:#008000">00</span> <span style="color:#008000">00</span> <span style="color:#008000">00</span> <span style="color:#008000">00</span> <span style="color:#008000">00</span> <span style="color:#008000">00</span> <span style="color:#008000">00</span> <span style="color:#008000">00</span> <span style="color:#008000">00</span> <span style="color:#008000">00</span> </div>
<div class="t" style="left:455.5px;top:712.76px;color:#000;font-size:13.46px;font-family:'Liberation Mono', monospace;line-height:13px;clip-path:inset(0 0 0px 0)"><span style="color:#008000">.</span><span style="color:#008000">.</span><span style="color:#008000">.</span><span style="color:#008000">.</span><span style="color:#008000">.</span><span style="color:#008000">.</span><span style="color:#008000">.</span><span style="color:#008000">.</span><span style="color:#008000">.</span><span style="color:#008000">.</span><span style="color:#008000">.</span><span style="color:#008000">.</span><span style="color:#008000">.</span><span style="color:#008000">.</span><span style="color:#008000">.</span><span style="color:#008000">.</span></div>
<div class="t" style="left:-5.5px;top:725.88px;color:#000;font-size:13.46px;font-family:'Liberation Mono', monospace;line-height:13px;clip-path:inset(0 0 0px 0)">77491090</div>
<div class="t" style="left:68.1px;top:725.88px;color:#000;font-size:13.46px;font-family:'Liberation Mono', monospace;line-height:13px;clip-path:inset(0 0 0px 0)"><span style="color:#008000">00</span> <span style="color:#008000">00</span> <span style="color:#008000">00</span> <span style="color:#008000">00</span> <span style="color:#008000">00</span> <span style="color:#008000">00</span> <span style="color:#008000">00</span> <span style="color:#008000">00</span> <span style="color:#008000">00</span> <span style="color:#008000">00</span> <span style="color:#008000">00</span> <span style="color:#008000">00</span> <span style="color:#008000">00</span> <span style="color:#008000">00</span> <span style="color:#008000">00</span> <span style="color:#008000">00</span> </div>
<div class="t" style="left:455.5px;top:725.88px;color:#000;font-size:13.46px;font-family:'Liberation Mono', monospace;line-height:13px;clip-path:inset(0 0 0px 0)"><span style="color:#008000">.</span><span style="color:#008000">.</span><span style="color:#008000">.</span><span style="color:#008000">.</span><span style="color:#008000">.</span><span style="color:#008000">.</span><span style="color:#008000">.</span><span style="color:#008000">.</span><span style="color:#008000">.</span><span style="color:#008000">.</span><span style="color:#008000">.</span><span style="color:#008000">.</span><span style="color:#008000">.</span><span style="color:#008000">.</span><span style="color:#008000">.</span><span style="color:#008000">.</span></div>
<div class="t" style="left:-5.5px;top:739.0px;color:#000;font-size:13.46px;font-family:'Liberation Mono', monospace;line-height:13px;clip-path:inset(0 0 0px 0)">774910A0</div>
<div class="t" style="left:68.1px;top:739.0px;color:#000;font-size:13.46px;font-family:'Liberation Mono', monospace;line-height:13px;clip-path:inset(0 0 0px 0)"><span style="color:#008000">00</span> <span style="color:#008000">00</span> <span style="color:#008000">00</span> <span style="color:#008000">00</span> <span style="color:#008000">00</span> <span style="color:#008000">00</span> <span style="color:#008000">00</span> <span style="color:#008000">00</span> <span style="color:#008000">00</span> <span style="color:#008000">00</span> <span style="color:#008000">00</span> <span style="color:#008000">00</span> <span style="color:#008000">00</span> <span style="color:#008000">00</span> <span style="color:#008000">00</span> <span style="color:#008000">00</span> </div>
<div class="t" style="left:455.5px;top:739.0px;color:#000;font-size:13.46px;font-family:'Liberation Mono', monospace;line-height:13px;clip-path:inset(0 0 0px 0)"><span style="color:#008000">.</span><span style="color:#008000">.</span><span style="color:#008000">.</span><span style="color:#008000">.</span><span style="color:#008000">.</span><span style="color:#008000">.</span><span style="color:#008000">.</span><span style="color:#008000">.</span><span style="color:#008000">.</span><span style="color:#008000">.</span><span style="color:#008000">.</span><span style="color:#008000">.</span><span style="color:#008000">.</span><span style="color:#008000">.</span><span style="color:#008000">.</span><span style="color:#008000">.</span></div>
<div class="t" style="left:-5.5px;top:752.12px;color:#000;font-size:13.46px;font-family:'Liberation Mono', monospace;line-height:13px;clip-path:inset(0 0 0px 0)">774910B0</div>
<div class="t" style="left:68.1px;top:752.12px;color:#000;font-size:13.46px;font-family:'Liberation Mono', monospace;line-height:13px;clip-path:inset(0 0 0px 0)"><span style="color:#008000">00</span> <span style="color:#008000">00</span> <span style="color:#008000">00</span> <span style="color:#008000">00</span> <span style="color:#008000">00</span> <span style="color:#008000">00</span> <span style="color:#008000">00</span> <span style="color:#008000">00</span> <span style="color:#008000">00</span> <span style="color:#008000">00</span> <span style="color:#008000">00</span> <span style="color:#008000">00</span> <span style="color:#008000">00</span> <span style="color:#008000">00</span> <span style="color:#008000">00</span> <span style="color:#008000">00</span> </div>
<div class="t" style="left:455.5px;top:752.12px;color:#000;font-size:13.46px;font-family:'Liberation Mono', monospace;line-height:13px;clip-path:inset(0 0 0px 0)"><span style="color:#008000">.</span><span style="color:#008000">.</span><span style="color:#008000">.</span><span style="color:#008000">.</span><span style="color:#008000">.</span><span style="color:#008000">.</span><span style="color:#008000">.</span><span style="color:#008000">.</span><span style="color:#008000">.</span><span style="color:#008000">.</span><span style="color:#008000">.</span><span style="color:#008000">.</span><span style="color:#008000">.</span><span style="color:#008000">.</span><span style="color:#008000">.</span><span style="color:#008000">.</span></div>
<div class="t" style="left:-5.5px;top:765.24px;color:#000;font-size:13.46px;font-family:'Liberation Mono', monospace;line-height:13px;clip-path:inset(0 0 0px 0)">774910C0</div>
<div class="t" style="left:68.1px;top:765.24px;color:#000;font-size:13.46px;font-family:'Liberation Mono', monospace;line-height:13px;clip-path:inset(0 0 0px 0)"><span style="color:#008000">00</span> <span style="color:#008000">00</span> <span style="color:#008000">00</span> <span style="color:#008000">00</span> <span style="color:#008000">00</span> <span style="color:#008000">00</span> <span style="color:#008000">00</span> <span style="color:#008000">00</span> <span style="color:#008000">00</span> <span style="color:#008000">00</span> <span style="color:#008000">00</span> <span style="color:#008000">00</span> <span style="color:#008000">00</span> <span style="color:#008000">00</span> <span style="color:#008000">00</span> <span style="color:#008000">00</span> </div>
<div class="t" style="left:455.5px;top:765.24px;color:#000;font-size:13.46px;font-family:'Liberation Mono', monospace;line-height:13px;clip-path:inset(0 0 0px 0)"><span style="color:#008000">.</span><span style="color:#008000">.</span><span style="color:#008000">.</span><span style="color:#008000">.</span><span style="color:#008000">.</span><span style="color:#008000">.</span><span style="color:#008000">.</span><span style="color:#008000">.</span><span style="color:#008000">.</span><span style="color:#008000">.</span><span style="color:#008000">.</span><span style="color:#008000">.</span><span style="color:#008000">.</span><span style="color:#008000">.</span><span style="color:#008000">.</span><span style="color:#008000">.</span></div>
<div class="t" style="left:-5.5px;top:778.36px;color:#000;font-size:13.46px;font-family:'Liberation Mono', monospace;line-height:13px;clip-path:inset(0 0 0px 0)">774910D0</div>
<div class="t" style="left:68.1px;top:778.36px;color:#000;font-size:13.46px;font-family:'Liberation Mono', monospace;line-height:13px;clip-path:inset(0 0 0px 0)"><span style="color:#008000">00</span> <span style="color:#008000">00</span> <span style="color:#008000">00</span> <span style="color:#008000">00</span> <span style="color:#008000">00</span> <span style="color:#008000">00</span> <span style="color:#008000">00</span> <span style="color:#008000">00</span> <span style="color:#008000">00</span> <span style="color:#008000">00</span> <span style="color:#008000">00</span> <span style="color:#008000">00</span> <span style="color:#008000">00</span> <span style="color:#008000">00</span> <span style="color:#008000">00</span> <span style="color:#008000">00</span> </div>
<div class="t" style="left:455.5px;top:778.36px;color:#000;font-size:13.46px;font-family:'Liberation Mono', monospace;line-height:13px;clip-path:inset(0 0 0px 0)"><span style="color:#008000">.</span><span style="color:#008000">.</span><span style="color:#008000">.</span><span style="color:#008000">.</span><span style="color:#008000">.</span><span style="color:#008000">.</span><span style="color:#008000">.</span><span style="color:#008000">.</span><span style="color:#008000">.</span><span style="color:#008000">.</span><span style="color:#008000">.</span><span style="color:#008000">.</span><span style="color:#008000">.</span><span style="color:#008000">.</span><span style="color:#008000">.</span><span style="color:#008000">.</span></div>
<div class="t" style="left:-5.5px;top:791.48px;color:#000;font-size:13.46px;font-family:'Liberation Mono', monospace;line-height:13px;clip-path:inset(0 0 0px 0)">774910E0</div>
<div class="t" style="left:68.1px;top:791.48px;color:#000;font-size:13.46px;font-family:'Liberation Mono', monospace;line-height:13px;clip-path:inset(0 0 0px 0)"><span style="color:#008000">00</span> <span style="color:#008000">00</span> <span style="color:#008000">00</span> <span style="color:#008000">00</span> <span style="color:#008000">00</span> <span style="color:#008000">00</span> <span style="color:#008000">00</span> <span style="color:#008000">00</span> <span style="color:#008000">00</span> <span style="color:#008000">00</span> <span style="color:#008000">00</span> <span style="color:#008000">00</span> <span style="color:#008000">00</span> <span style="color:#008000">00</span> <span style="color:#008000">00</span> <span style="color:#008000">00</span> </div>
<div class="t" style="left:455.5px;top:791.48px;color:#000;font-size:13.46px;font-family:'Liberation Mono', monospace;line-height:13px;clip-path:inset(0 0 0px 0)"><span style="color:#008000">.</span><span style="color:#008000">.</span><span style="color:#008000">.</span><span style="color:#008000">.</span><span style="color:#008000">.</span><span style="color:#008000">.</span><span style="color:#008000">.</span><span style="color:#008000">.</span><span style="color:#008000">.</span><span style="color:#008000">.</span><span style="color:#008000">.</span><span style="color:#008000">.</span><span style="color:#008000">.</span><span style="color:#008000">.</span><span style="color:#008000">.</span><span style="color:#008000">.</span></div>
<div class="t" style="left:-5.5px;top:804.6px;color:#000;font-size:13.46px;font-family:'Liberation Mono', monospace;line-height:13px;clip-path:inset(0 0 10px 0)">774910F0</div>
<div class="t" style="left:68.1px;top:804.6px;color:#000;font-size:13.46px;font-family:'Liberation Mono', monospace;line-height:13px;clip-path:inset(0 0 10px 0)"><span style="color:#008000">00</span> <span style="color:#008000">00</span> <span style="color:#008000">00</span> <span style="color:#008000">00</span> <span style="color:#008000">00</span> <span style="color:#008000">00</span> <span style="color:#008000">00</span> <span style="color:#008000">00</span> <span style="color:#008000">00</span> <span style="color:#008000">00</span> <span style="color:#008000">00</span> <span style="color:#008000">00</span> <span style="color:#008000">00</span> <span style="color:#008000">00</span> <span style="color:#008000">00</span> <span style="color:#008000">00</span> </div>
<div class="t" style="left:455.5px;top:804.6px;color:#000;font-size:13.46px;font-family:'Liberation Mono', monospace;line-height:13px;clip-path:inset(0 0 10px 0)"><span style="color:#008000">.</span><span style="color:#008000">.</span><span style="color:#008000">.</span><span style="color:#008000">.</span><span style="color:#008000">.</span><span style="color:#008000">.</span><span style="color:#008000">.</span><span style="color:#008000">.</span><span style="color:#008000">.</span><span style="color:#008000">.</span><span style="color:#008000">.</span><span style="color:#008000">.</span><span style="color:#008000">.</span><span style="color:#008000">.</span><span style="color:#008000">.</span><span style="color:#008000">.</span></div>
<div style="left:161px;top:607px;width:1px;height:200px;background:#808080;"></div>
<div style="left:258px;top:607px;width:1px;height:200px;background:#808080;"></div>
<div style="left:355px;top:607px;width:1px;height:200px;background:#808080;"></div>
<div style="left:450.5px;top:607px;width:1px;height:200px;background:#808080;"></div>
<div style="left:63.5px;top:607px;width:1px;height:200px;background:#808080;"></div>
<div style="left:165.06px;top:620.0px;width:87.88px;height:2px;background:#ff0000;"></div>
<div style="left:262.02px;top:620.0px;width:87.88px;height:2px;background:#000080;"></div>
<div style="left:358.98px;top:620.0px;width:87.88px;height:2px;background:#ff0000;"></div>
<div style="left:68.1px;top:633.12px;width:87.88px;height:2px;background:#000080;"></div>
<div style="left:165.06px;top:633.12px;width:87.88px;height:2px;background:#ff0000;"></div>
<div style="left:262.02px;top:633.12px;width:87.88px;height:2px;background:#000080;"></div>
<div style="left:358.98px;top:633.12px;width:87.88px;height:2px;background:#ff0000;"></div>
<div style="left:262.02px;top:646.24px;width:87.88px;height:2px;background:#ff0000;"></div>
<div style="left:165.06px;top:672.48px;width:87.88px;height:2px;background:#ff0000;"></div>
<div style="left:596px;top:607px;width:22px;height:201px;background:#f0f0f0;"></div>
<div style="left:605px;top:613px;width:6px;height:21px;background:#868686;"></div>
<div style="left:0px;top:808px;width:618px;height:20px;background:#f0f0f0;"></div>
<div style="left:14px;top:815px;width:551px;height:6px;background:#868686;"></div>
<div style="left:620px;top:561px;width:404px;height:268px;background:#f0f0f0;border-top:1px solid #a0a8b0;border-left:1px solid #a0a8b0;border-bottom:1px solid #a0a8b0"></div>
<div style="left:621px;top:562px;width:387px;height:245px;background:#fff8f0;"></div>
<div style="left:621px;top:562.5px;width:71px;height:13px;background:#000;"></div>
<div style="left:696px;top:562.5px;width:70px;height:13px;background:#c0c0c0;"></div>
<div style="left:692px;top:562px;width:1px;height:245px;background:#808080;"></div>
<div style="left:766.5px;top:562px;width:1px;height:245px;background:#808080;"></div>
<div class="t" style="left:624.5px;top:563.6px;color:#ffffff;font-size:13.46px;font-family:'Liberation Mono', monospace;line-height:13px;clip-path:inset(0 0 0px 0)">0019FDA4</div>
<div class="t" style="left:700px;top:563.6px;color:#000;font-size:13.46px;font-family:'Liberation Mono', monospace;line-height:13px;clip-path:inset(0 0 0px 0)">004013C1</div>
<div class="t" style="left:772px;top:563.6px;color:#ff0000;font-size:13.46px;font-family:'Liberation Mono', monospace;line-height:13px;clip-path:inset(0 0 0px 0)">return to crackme.004013C1 from crackme.00401000</div>
<div class="t" style="left:624.5px;top:576.68px;color:#808080;font-size:13.46px;font-family:'Liberation Mono', monospace;line-height:13px;clip-path:inset(0 0 0px 0)">0019FDA8</div>
<div class="t" style="left:700px;top:576.68px;color:#000;font-size:13.46px;font-family:'Liberation Mono', monospace;line-height:13px;clip-path:inset(0 0 0px 0)">004A0778</div>
<div class="t" style="left:772px;top:576.68px;color:#000;font-size:13.46px;font-family:'Liberation Mono', monospace;line-height:13px;clip-path:inset(0 0 0px 0)">"</div>
<svg style="left:780.08px;top:576.88px" width="227.92" height="14"><rect x="0" y="0" width="227.92" height="14" fill="url(#cjk)"/></svg>
<div class="t" style="left:624.5px;top:589.76px;color:#808080;font-size:13.46px;font-family:'Liberation Mono', monospace;line-height:13px;clip-path:inset(0 0 0px 0)">0019FDAC</div>
<div class="t" style="left:700px;top:589.76px;color:#000;font-size:13.46px;font-family:'Liberation Mono', monospace;line-height:13px;clip-path:inset(0 0 0px 0)">00402169</div>
<div class="t" style="left:772px;top:589.76px;color:#000;font-size:13.46px;font-family:'Liberation Mono', monospace;line-height:13px;clip-path:inset(0 0 0px 0)">crackme.00402169</div>
<div class="t" style="left:624.5px;top:602.84px;color:#808080;font-size:13.46px;font-family:'Liberation Mono', monospace;line-height:13px;clip-path:inset(0 0 0px 0)">0019FDB0</div>
<div class="t" style="left:700px;top:602.84px;color:#000;font-size:13.46px;font-family:'Liberation Mono', monospace;line-height:13px;clip-path:inset(0 0 0px 0)">00402160</div>
<div class="t" style="left:772px;top:602.84px;color:#000;font-size:13.46px;font-family:'Liberation Mono', monospace;line-height:13px;clip-path:inset(0 0 0px 0)">crackme.00402160</div>
<div class="t" style="left:624.5px;top:615.92px;color:#808080;font-size:13.46px;font-family:'Liberation Mono', monospace;line-height:13px;clip-path:inset(0 0 0px 0)">0019FDB4</div>
<div class="t" style="left:700px;top:615.92px;color:#000;font-size:13.46px;font-family:'Liberation Mono', monospace;line-height:13px;clip-path:inset(0 0 0px 0)">00000030</div>
<div class="t" style="left:772px;top:615.92px;color:#000;font-size:13.46px;font-family:'Liberation Mono', monospace;line-height:13px;clip-path:inset(0 0 0px 0)"></div>
<div class="t" style="left:624.5px;top:629.0px;color:#808080;font-size:13.46px;font-family:'Liberation Mono', monospace;line-height:13px;clip-path:inset(0 0 0px 0)">0019FDB8</div>
<div class="t" style="left:700px;top:629.0px;color:#000;font-size:13.46px;font-family:'Liberation Mono', monospace;line-height:13px;clip-path:inset(0 0 0px 0)">00401232</div>
<div class="t" style="left:772px;top:629.0px;color:#ff0000;font-size:13.46px;font-family:'Liberation Mono', monospace;line-height:13px;clip-path:inset(0 0 0px 0)">return to crackme.00401232 from crackme.00401000</div>
<div class="t" style="left:624.5px;top:642.08px;color:#808080;font-size:13.46px;font-family:'Liberation Mono', monospace;line-height:13px;clip-path:inset(0 0 0px 0)">0019FDBC</div>
<div class="t" style="left:700px;top:642.08px;color:#000;font-size:13.46px;font-family:'Liberation Mono', monospace;line-height:13px;clip-path:inset(0 0 0px 0)">0040218E</div>
<div class="t" style="left:772px;top:642.08px;color:#000;font-size:13.46px;font-family:'Liberation Mono', monospace;line-height:13px;clip-path:inset(0 0 0px 0)">crackme.0040218E</div>
<div class="t" style="left:624.5px;top:655.16px;color:#808080;font-size:13.46px;font-family:'Liberation Mono', monospace;line-height:13px;clip-path:inset(0 0 0px 0)">0019FDC0</div>
<div class="t" style="left:700px;top:655.16px;color:#000;font-size:13.46px;font-family:'Liberation Mono', monospace;line-height:13px;clip-path:inset(0 0 0px 0)">004A0778</div>
<div class="t" style="left:772px;top:655.16px;color:#000;font-size:13.46px;font-family:'Liberation Mono', monospace;line-height:13px;clip-path:inset(0 0 0px 0)">"</div>
<svg style="left:780.08px;top:655.36px" width="227.92" height="14"><rect x="0" y="0" width="227.92" height="14" fill="url(#cjk)"/></svg>
<div class="t" style="left:624.5px;top:668.24px;color:#808080;font-size:13.46px;font-family:'Liberation Mono', monospace;line-height:13px;clip-path:inset(0 0 0px 0)">0019FDC4</div>
<div class="t" style="left:700px;top:668.24px;color:#000;font-size:13.46px;font-family:'Liberation Mono', monospace;line-height:13px;clip-path:inset(0 0 0px 0)">00000111</div>
<div class="t" style="left:772px;top:668.24px;color:#000;font-size:13.46px;font-family:'Liberation Mono', monospace;line-height:13px;clip-path:inset(0 0 0px 0)"></div>
<div class="t" style="left:624.5px;top:681.32px;color:#ff0000;font-size:13.46px;font-family:'Liberation Mono', monospace;line-height:13px;clip-path:inset(0 0 0px 0)">0019FDC8</div>
<div class="t" style="left:700px;top:681.32px;color:#000;font-size:13.46px;font-family:'Liberation Mono', monospace;line-height:13px;clip-path:inset(0 0 0px 0)">00401128</div>
<div class="t" style="left:772px;top:681.32px;color:#ff0000;font-size:13.46px;font-family:'Liberation Mono', monospace;line-height:13px;clip-path:inset(0 0 0px 0)">return to crackme.00401128 from crackme.00401000</div>
<div class="t" style="left:624.5px;top:694.4px;color:#808080;font-size:13.46px;font-family:'Liberation Mono', monospace;line-height:13px;clip-path:inset(0 0 0px 0)">0019FDCC</div>
<div class="t" style="left:700px;top:694.4px;color:#000;font-size:13.46px;font-family:'Liberation Mono', monospace;line-height:13px;clip-path:inset(0 0 0px 0)">0019FDF8</div>
<div class="t" style="left:772px;top:694.4px;color:#000;font-size:13.46px;font-family:'Liberation Mono', monospace;line-height:13px;clip-path:inset(0 0 0px 0)"></div>
<div class="t" style="left:624.5px;top:707.48px;color:#808080;font-size:13.46px;font-family:'Liberation Mono', monospace;line-height:13px;clip-path:inset(0 0 0px 0)">0019FDD0</div>
<div class="t" style="left:700px;top:707.48px;color:#000;font-size:13.46px;font-family:'Liberation Mono', monospace;line-height:13px;clip-path:inset(0 0 0px 0)">76087C92</div>
<div class="t" style="left:772px;top:707.48px;color:#ff0000;font-size:13.46px;font-family:'Liberation Mono', monospace;line-height:13px;clip-path:inset(0 0 0px 0)">return to user32.76087C92 from user32.76087C00</div>
<div class="t" style="left:624.5px;top:720.56px;color:#808080;font-size:13.46px;font-family:'Liberation Mono', monospace;line-height:13px;clip-path:inset(0 0 0px 0)">0019FDD4</div>
<div class="t" style="left:700px;top:720.56px;color:#000;font-size:13.46px;font-family:'Liberation Mono', monospace;line-height:13px;clip-path:inset(0 0 0px 0)">004A0778</div>
<div class="t" style="left:772px;top:720.56px;color:#000;font-size:13.46px;font-family:'Liberation Mono', monospace;line-height:13px;clip-path:inset(0 0 0px 0)">"</div>
<svg style="left:780.08px;top:720.76px" width="227.92" height="14"><rect x="0" y="0" width="227.92" height="14" fill="url(#cjk)"/></svg>
<div class="t" style="left:624.5px;top:733.64px;color:#808080;font-size:13.46px;font-family:'Liberation Mono', monospace;line-height:13px;clip-path:inset(0 0 0px 0)">0019FDD8</div>
<div class="t" style="left:700px;top:733.64px;color:#000;font-size:13.46px;font-family:'Liberation Mono', monospace;line-height:13px;clip-path:inset(0 0 0px 0)">00000111</div>
<div class="t" style="left:772px;top:733.64px;color:#000;font-size:13.46px;font-family:'Liberation Mono', monospace;line-height:13px;clip-path:inset(0 0 0px 0)"></div>
<div class="t" style="left:624.5px;top:746.72px;color:#808080;font-size:13.46px;font-family:'Liberation Mono', monospace;line-height:13px;clip-path:inset(0 0 0px 0)">0019FDDC</div>
<div class="t" style="left:700px;top:746.72px;color:#000;font-size:13.46px;font-family:'Liberation Mono', monospace;line-height:13px;clip-path:inset(0 0 0px 0)">00000066</div>
<div class="t" style="left:772px;top:746.72px;color:#000;font-size:13.46px;font-family:'Liberation Mono', monospace;line-height:13px;clip-path:inset(0 0 0px 0)"></div>
<div class="t" style="left:624.5px;top:759.8px;color:#808080;font-size:13.46px;font-family:'Liberation Mono', monospace;line-height:13px;clip-path:inset(0 0 0px 0)">0019FDE0</div>
<div class="t" style="left:700px;top:759.8px;color:#000;font-size:13.46px;font-family:'Liberation Mono', monospace;line-height:13px;clip-path:inset(0 0 0px 0)">00000000</div>
<div class="t" style="left:772px;top:759.8px;color:#000;font-size:13.46px;font-family:'Liberation Mono', monospace;line-height:13px;clip-path:inset(0 0 0px 0)"></div>
<div class="t" style="left:624.5px;top:772.88px;color:#ff0000;font-size:13.46px;font-family:'Liberation Mono', monospace;line-height:13px;clip-path:inset(0 0 0px 0)">0019FDE4</div>
<div class="t" style="left:700px;top:772.88px;color:#000;font-size:13.46px;font-family:'Liberation Mono', monospace;line-height:13px;clip-path:inset(0 0 0px 0)">00401128</div>
<div class="t" style="left:772px;top:772.88px;color:#ff0000;font-size:13.46px;font-family:'Liberation Mono', monospace;line-height:13px;clip-path:inset(0 0 0px 0)">return to crackme.00401128 from crackme.00401000</div>
<div class="t" style="left:624.5px;top:785.96px;color:#808080;font-size:13.46px;font-family:'Liberation Mono', monospace;line-height:13px;clip-path:inset(0 0 0px 0)">0019FDE8</div>
<div class="t" style="left:700px;top:785.96px;color:#000;font-size:13.46px;font-family:'Liberation Mono', monospace;line-height:13px;clip-path:inset(0 0 0px 0)">DCBAABCD</div>
<div class="t" style="left:772px;top:785.96px;color:#000;font-size:13.46px;font-family:'Liberation Mono', monospace;line-height:13px;clip-path:inset(0 0 0px 0)"></div>
<div class="t" style="left:624.5px;top:799.04px;color:#808080;font-size:13.46px;font-family:'Liberation Mono', monospace;line-height:13px;clip-path:inset(0 0 5px 0)">0019FDEC</div>
<div class="t" style="left:700px;top:799.04px;color:#000;font-size:13.46px;font-family:'Liberation Mono', monospace;line-height:13px;clip-path:inset(0 0 5px 0)">004A0778</div>
<div class="t" style="left:772px;top:799.04px;color:#000;font-size:13.46px;font-family:'Liberation Mono', monospace;line-height:13px;clip-path:inset(0 0 5px 0)">"</div>
<svg style="left:780.08px;top:799.24px" width="227.92" height="14"><rect x="0" y="0" width="227.92" height="14" fill="url(#cjk)"/></svg>
<div style="left:694px;top:565px;width:2px;height:139px;background:#000;"></div>
<div style="left:694px;top:565px;width:5px;height:2px;background:#000;"></div>
<div style="left:694px;top:703px;width:5px;height:2px;background:#000;"></div>
<div style="left:694px;top:708px;width:2px;height:99px;background:#0000ff;"></div>
<div style="left:694px;top:708px;width:5px;height:2px;background:#0000ff;"></div>
<div style="left:1008px;top:562px;width:16px;height:245px;background:#f0f0f0;"></div>
<div style="left:1016px;top:732px;width:6px;height:23px;background:#868686;"></div>
<div style="left:621px;top:807px;width:403px;height:21px;background:#f0f0f0;"></div>
<div style="left:642px;top:814px;width:92px;height:6px;background:#868686;"></div>
<div style="left:0px;top:829px;width:1024px;height:27px;background:#f0f0f0;"></div>
<div class="t" style="left:-10.5px;top:835.5px;color:#000;font-size:13.43px;font-family:'Liberation Mono', monospace;line-height:15px;transform:scaleY(1.12);transform-origin:0 2px;-webkit-text-stroke:0.15px #000;">Command:</div>
<div style="left:66px;top:832px;width:850px;height:21px;background:#ffffff;border:1px solid #d8d8d8;border-bottom:1px solid #a8a8a8"></div>
<div class="t" style="left:68px;top:835.5px;color:#8c8c8c;font-size:13.43px;font-family:'Liberation Mono', monospace;line-height:15px;transform:scaleY(1.0);transform-origin:0 2px;-webkit-text-stroke:0.15px #8c8c8c;">Commands are comma separated (like assembly instructions): mov eax, ebx</div>
<div style="left:917px;top:832px;width:107px;height:20px;background:#fdfdfd;border:1px solid #d0d0d0;border-radius:3px"></div>
<div class="t" style="left:920px;top:835.5px;color:#000;font-size:13.43px;font-family:'Liberation Mono', monospace;line-height:15px;transform:scaleY(1.12);transform-origin:0 2px;-webkit-text-stroke:0.15px #000;">Default</div>
<svg style="left:1011px;top:840px" width="9" height="5"><path d="M0 0 L9 0 L4.5 5z" fill="#000"/></svg>
<div style="left:0px;top:855px;width:1024px;height:19px;background:#c0c0c0;"></div>
<div style="left:0px;top:858px;width:92px;height:16px;background:#ffff00;"></div>
<div class="t" style="left:18px;top:860px;color:#ff0000;font-size:13.43px;font-family:'Liberation Mono', monospace;line-height:15px;transform:scaleY(1.12);transform-origin:0 2px;-webkit-text-stroke:0.15px #ff0000;">Paused</div>
<div style="left:98px;top:858px;width:649px;height:16px;background:#c0c0c0;border-top:1px solid #808080;border-left:1px solid #808080;border-right:1px solid #f8f8f8"></div>
<div class="t" style="left:103px;top:860px;color:#000;font-size:13.43px;font-family:'Liberation Mono', monospace;line-height:15px;transform:scaleY(1.12);transform-origin:0 2px;-webkit-text-stroke:0.15px #000;">INT3 breakpoint at &lt;user32.MessageBoxA&gt; (760CA380)!</div>
<div style="left:753px;top:858px;width:271px;height:16px;background:#c0c0c0;border-top:1px solid #808080;border-left:1px solid #808080"></div>
<div class="t" style="left:758px;top:860px;color:#000;font-size:13.43px;font-family:'Liberation Mono', monospace;line-height:15px;transform:scaleY(1.12);transform-origin:0 2px;-webkit-text-stroke:0.15px #000;">Time Wasted Debugging: 0:04:19:15</div>
</body></html>
